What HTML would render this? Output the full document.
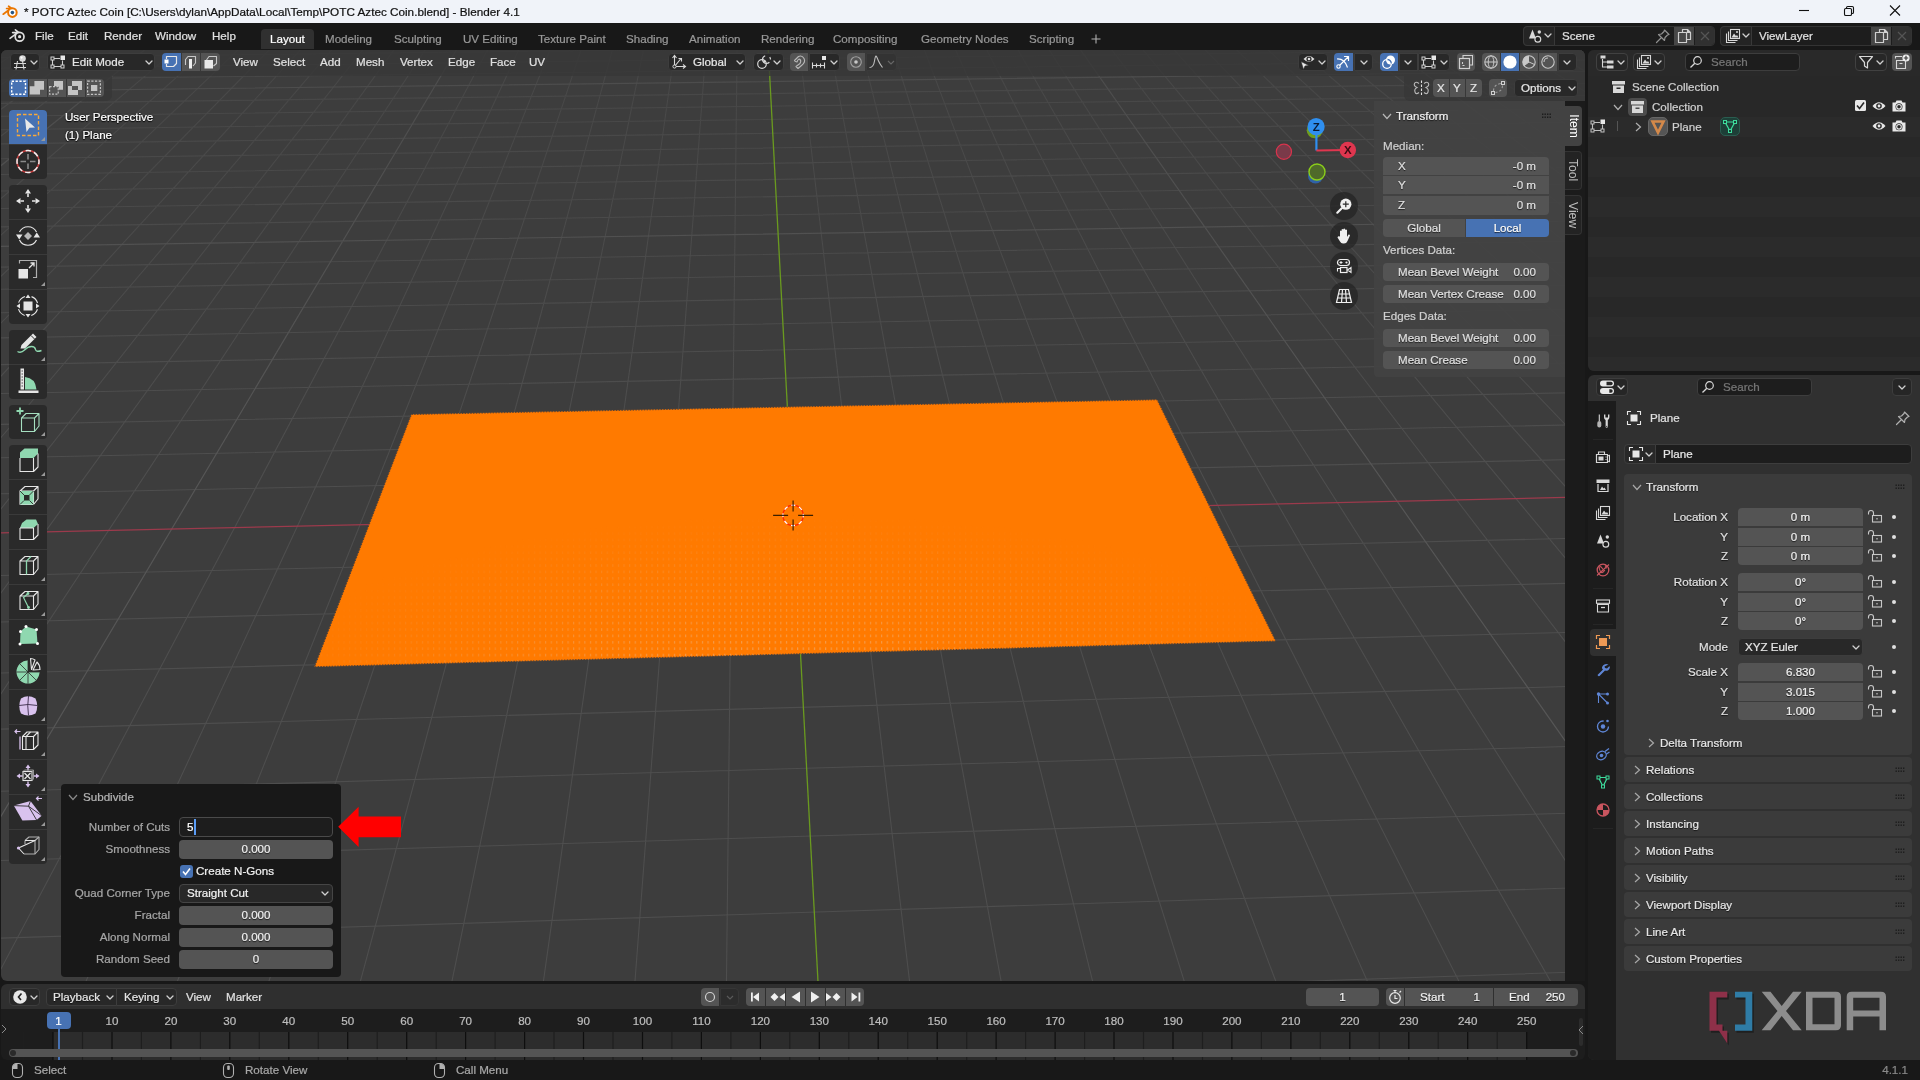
<!DOCTYPE html>
<html><head><meta charset="utf-8"><title>Blender</title>
<style>
*{box-sizing:border-box;margin:0;padding:0}
html,body{width:1920px;height:1080px;overflow:hidden;background:#181818}
body{position:relative;font-family:"Liberation Sans",sans-serif;font-size:12px;color:#e0e0e0;line-height:1}
.a{position:absolute}
.t{position:absolute;white-space:nowrap;line-height:14px;height:14px;font-size:11.6px;-webkit-text-stroke:.22px currentColor}
.ts{text-shadow:0 1px 1px rgba(0,0,0,.75)}
.dim{color:#989898}
.f{position:absolute;border-radius:4px}
.num{background:#545454}
.txt{background:#1d1d1d;border:1px solid #3d3d3d}
.btn{background:#545454}
.dd{background:#282828;border:1px solid #3d3d3d}
.blue{background:#4772b3}
svg{position:absolute;overflow:visible}
#vp{overflow:hidden;border-radius:6px}
.ic{stroke:#e0e0e0;fill:none;stroke-width:1.2;stroke-linecap:round;stroke-linejoin:round}
.chev{stroke:#d0d0d0;fill:none;stroke-width:1.3;stroke-linecap:round;stroke-linejoin:round}
#root{position:absolute;left:0;top:0;width:1920px;height:1080px;will-change:transform}
</style></head><body><div id="root">

<div class="a" id="titlebar" style="left:0;top:0;width:1920px;height:23px;background:#f0f3f9"></div>
<svg style="left:2px;top:4px" width="17" height="15" viewBox="0 0 17 15"><path d="M1.2 10.2 8.8 4.5H4.6M6.6 2.2l3.4 2.6" stroke="#ea7600" stroke-width="1.7" fill="none" stroke-linecap="round" stroke-linejoin="round"/><circle cx="10.4" cy="8.6" r="4.3" fill="#fff" stroke="#ea7600" stroke-width="2"/><circle cx="10.4" cy="8.6" r="1.8" fill="#265787"/></svg>
<div class="t" style="left:24px;top:5px;color:#111;font-size:11.72px" id="tt">* POTC Aztec Coin [C:\Users\dylan\AppData\Local\Temp\POTC Aztec Coin.blend] - Blender 4.1</div>
<svg style="left:1798px;top:5px" width="110" height="14" viewBox="0 0 110 14" fill="none" stroke="#111" stroke-width="1.1"><path d="M1 5.5H11"/><rect x="46.5" y="3.5" width="7" height="7" rx="1.3"/><path d="M48.5 3.5V2.8Q48.5 1.5 49.8 1.5H54.2Q55.5 1.5 55.5 2.8V7.2Q55.5 8.5 54.2 8.5H53.5"/><path d="M92 0.5 102 10.5M102 0.5 92 10.5"/></svg>

<div class="a" id="topbar" style="left:0;top:23px;width:1920px;height:27px;background:#181818"></div>
<!-- blender logo -->
<svg style="left:9px;top:28px" width="17" height="15" viewBox="0 0 17 15"><path d="M1 10.3 8.6 4.6H3.6M6.4 1.8l3.2 2.6" stroke="#e0e0e0" stroke-width="1.6" fill="none" stroke-linecap="round" stroke-linejoin="round"/><circle cx="10.6" cy="8.7" r="4.4" fill="#181818" stroke="#e0e0e0" stroke-width="1.7"/><circle cx="10.6" cy="8.7" r="1.6" fill="#e0e0e0"/></svg>
<div class="t" style="left:35px;top:29px">File</div>
<div class="t" style="left:68px;top:29px">Edit</div>
<div class="t" style="left:104px;top:29px">Render</div>
<div class="t" style="left:155px;top:29px">Window</div>
<div class="t" style="left:212px;top:29px">Help</div>
<div class="a" style="left:261px;top:29px;width:53px;height:20px;background:#303030;border-radius:4px 4px 0 0"></div>
<div class="t" style="left:270px;top:32px;color:#fff">Layout</div>
<div class="t dim" style="left:325px;top:32px">Modeling</div>
<div class="t dim" style="left:394px;top:32px">Sculpting</div>
<div class="t dim" style="left:463px;top:32px">UV Editing</div>
<div class="t dim" style="left:538px;top:32px">Texture Paint</div>
<div class="t dim" style="left:626px;top:32px">Shading</div>
<div class="t dim" style="left:689px;top:32px">Animation</div>
<div class="t dim" style="left:761px;top:32px">Rendering</div>
<div class="t dim" style="left:833px;top:32px">Compositing</div>
<div class="t dim" style="left:921px;top:32px">Geometry Nodes</div>
<div class="t dim" style="left:1029px;top:32px">Scripting</div>
<svg style="left:1091px;top:34px" width="10" height="10" viewBox="0 0 10 10"><path d="M5 0.5V9.5M0.5 5H9.5" stroke="#b0b0b0" stroke-width="1.1"/></svg>
<!-- scene selector -->
<div class="a" style="left:1523px;top:26px;width:192px;height:20px;background:#1d1d1d;border:1px solid #333;border-radius:4px"></div>
<div class="a" style="left:1523px;top:26px;width:32px;height:20px;background:#242424;border:1px solid #383838;border-radius:4px 0 0 4px"></div>
<div class="a" style="left:1674px;top:27px;width:20px;height:18px;background:#474747"></div>
<div class="a" style="left:1695px;top:27px;width:19px;height:18px;background:#303030;border-radius:0 3px 3px 0"></div>
<svg style="left:1527px;top:28px" width="16" height="16" viewBox="0 0 16 16"><path d="M5.5 1.5 9 10.5H2z" fill="#d8d8d8"/><circle cx="12.3" cy="4" r="1.7" fill="#d8d8d8"/><circle cx="10.8" cy="11.3" r="2.9" fill="#1d1d1d" stroke="#d8d8d8" stroke-width="1.2"/></svg>
<svg style="left:1544px;top:33px" width="8" height="6" viewBox="0 0 8 6"><path class="chev" d="M1 1 4 4 7 1"/></svg>
<div class="t" style="left:1562px;top:29px">Scene</div>
<svg style="left:1655px;top:28px" width="16" height="16" viewBox="0 0 16 16"><path d="M9.5 2 14 6.5 12.5 7 10 9.5 9.5 12.5 3.5 6.5 6.5 6 9 3.5ZM6 10 1.5 14.5" stroke="#909090" stroke-width="1.2" fill="none" stroke-linejoin="round" stroke-linecap="round"/></svg>
<svg style="left:1677px;top:28px" width="15" height="16" viewBox="0 0 15 16"><path d="M5.5 4V1.5H10.5L13.5 4.5V11.5H9.5M10.5 1.5V4.5H13.5" stroke="#d0d0d0" stroke-width="1.2" fill="none" stroke-linejoin="round"/><path d="M1.5 4.5H9.5V14.5H1.5Z" stroke="#d0d0d0" stroke-width="1.2" fill="none" stroke-linejoin="round"/></svg>
<svg style="left:1700px;top:31px" width="10" height="10" viewBox="0 0 10 10"><path d="M1 1 9 9M9 1 1 9" stroke="#555" stroke-width="1.2"/></svg>
<!-- viewlayer selector -->
<div class="a" style="left:1720px;top:26px;width:192px;height:20px;background:#1d1d1d;border:1px solid #333;border-radius:4px"></div>
<div class="a" style="left:1720px;top:26px;width:32px;height:20px;background:#242424;border:1px solid #383838;border-radius:4px 0 0 4px"></div>
<div class="a" style="left:1871px;top:27px;width:20px;height:18px;background:#474747"></div>
<div class="a" style="left:1892px;top:27px;width:19px;height:18px;background:#303030;border-radius:0 3px 3px 0"></div>
<svg style="left:1725px;top:28px" width="16" height="16" viewBox="0 0 16 16"><path d="M1.5 5.5V14.5H10.5M3.5 3.5V12.5H12.5" stroke="#d8d8d8" stroke-width="1.1" fill="none"/><rect x="5.5" y="1.5" width="9" height="9" fill="none" stroke="#d8d8d8" stroke-width="1.1"/><path d="M6.5 9.5 9 5.5 11 8 12 7 13.5 9.5Z" fill="#d8d8d8"/><circle cx="12" cy="4" r="1" fill="#d8d8d8"/></svg>
<svg style="left:1742px;top:33px" width="8" height="6" viewBox="0 0 8 6"><path class="chev" d="M1 1 4 4 7 1"/></svg>
<div class="t" style="left:1759px;top:29px">ViewLayer</div>
<svg style="left:1874px;top:28px" width="15" height="16" viewBox="0 0 15 16"><path d="M5.5 4V1.5H10.5L13.5 4.5V11.5H9.5M10.5 1.5V4.5H13.5" stroke="#d0d0d0" stroke-width="1.2" fill="none" stroke-linejoin="round"/><path d="M1.5 4.5H9.5V14.5H1.5Z" stroke="#d0d0d0" stroke-width="1.2" fill="none" stroke-linejoin="round"/></svg>
<svg style="left:1897px;top:31px" width="10" height="10" viewBox="0 0 10 10"><path d="M1 1 9 9M9 1 1 9" stroke="#555" stroke-width="1.2"/></svg>

<svg id="vp" width="1584" height="931" viewBox="1 50 1584 931" style="position:absolute;left:1px;top:50px" shape-rendering="auto">
<rect x="0" y="50" width="1585" height="931" fill="#3d3d3d"/>
<path d="M-3050.7 2097.2L336.3 -161.0M-2873.3 2087.5L354.0 -161.1M-2697.2 2077.9L371.7 -161.2M-2522.4 2068.4L389.3 -161.4M-2176.7 2049.5L424.6 -161.6M-2005.8 2040.1L442.2 -161.7M-1836.2 2030.8L459.8 -161.9M-1667.8 2021.6L477.4 -162.0M-1500.7 2012.5L495.0 -162.1M-1334.8 2003.4L512.6 -162.2M-1170.1 1994.4L530.1 -162.3M-1006.6 1985.5L547.6 -162.5M-844.3 1976.6L565.2 -162.6M-523.2 1959.1L600.1 -162.8M-364.4 1950.4L617.6 -162.9M-206.8 1941.8L635.1 -163.0M-50.2 1933.2L652.5 -163.2M105.2 1924.7L670.0 -163.3M259.6 1916.3L687.4 -163.4M412.8 1907.9L704.8 -163.5M565.0 1899.6L722.2 -163.6M716.1 1891.3L739.5 -163.8M1015.1 1874.9L774.3 -164.0M1163.1 1866.9L791.6 -164.1M1310.0 1858.8L808.9 -164.2M1456.0 1850.8L826.2 -164.4M1600.9 1842.9L843.5 -164.5M1744.8 1835.0L860.8 -164.6M1887.8 1827.2L878.0 -164.7M2029.8 1819.5L895.3 -164.8M2170.8 1811.8L912.5 -164.9M2450.0 1796.5L947.0 -165.2M2588.2 1788.9L964.2 -165.3M2725.5 1781.4L981.3 -165.4M2861.8 1774.0L998.5 -165.5M2997.3 1766.6L1015.7 -165.6M3131.8 1759.2L1032.8 -165.8M3265.5 1751.9L1049.9 -165.9M3398.3 1744.6L1067.0 -166.0M3530.2 1737.4L1084.1 -166.1M3791.5 1723.2L1118.3 -166.4M3920.8 1716.1L1135.3 -166.5M4049.4 1709.1L1152.4 -166.6M4177.1 1702.1L1169.4 -166.7M4303.9 1695.1L1186.4 -166.8M4430.0 1688.2L1203.4 -166.9M-8858.4 1445.9L7492.6 853.5M-8118.8 1301.2L7125.7 783.6M-7485.0 1177.3L6796.6 721.0M-6935.8 1069.9L6499.8 664.4M-6455.4 975.9L6230.7 613.2M-6031.5 893.0L5985.7 566.5M-5654.8 819.3L5761.6 523.9M-5317.7 753.4L5555.9 484.7M-5014.4 694.1L5366.4 448.6M-4490.6 591.6L5028.8 384.3M-4262.9 547.1L4877.9 355.6M-4054.2 506.3L4737.2 328.8M-3862.2 468.7L4605.8 303.8M-3684.9 434.0L4482.7 280.3M-3520.8 402.0L4367.3 258.3M-3368.5 372.2L4258.8 237.7M-3226.6 344.4L4156.5 218.2M-3094.2 318.5L4060.1 199.8M-2854.3 271.6L3882.7 166.1M-2745.2 250.3L3800.9 150.5M-2642.6 230.2L3723.3 135.7M-2545.8 211.3L3649.5 121.6M-2454.4 193.4L3579.2 108.3M-2368.0 176.5L3512.3 95.5M-2286.1 160.5L3448.5 83.4M-2208.4 145.3L3387.6 71.8M-2134.6 130.8L3329.3 60.7M-1997.5 104.0L3220.2 39.9M-1933.7 91.5L3169.0 30.1M-1872.9 79.6L3119.8 20.8M-1814.7 68.3L3072.7 11.8M-1759.1 57.4L3027.3 3.2M-1705.9 47.0L2983.7 -5.1" stroke="#4e4e4e" stroke-width="1.1" fill="none"/>
<path d="M-2348.9 2058.9L407.0 -161.5M-683.2 1967.8L582.7 -162.7M2310.9 1804.1L929.8 -165.1M3661.3 1730.3L1101.2 -166.2M-9732.7 1616.9L7904.3 931.9M-2970.4 294.3L3968.9 182.5M-2064.4 117.1L3273.6 50.1" stroke="#565656" stroke-width="1.2" fill="none"/>
<defs><linearGradient id="fd" x1="0" y1="0" x2="0" y2="1"><stop offset="0" stop-color="#3d3d3d" stop-opacity="0.4"/><stop offset="0.3" stop-color="#3d3d3d" stop-opacity="0.12"/><stop offset="0.45" stop-color="#3d3d3d" stop-opacity="0"/></linearGradient></defs>
<rect x="0" y="50" width="1585" height="931" fill="url(#fd)"/>
<path d="M866.1 1883.1L756.9 -163.9" stroke="#6a9a1f" stroke-width="1.3" fill="none"/>
<path d="M-4740.0 640.4L5191.2 415.2" stroke="#9c3a4c" stroke-width="1.3" fill="none"/>
<polygon points="411.5,414.5 1157.0,399.8 1275.5,641.0 314.7,666.7" fill="#ff7a00" stroke="#ff7a00" stroke-width="0.4" stroke-linejoin="miter"/>
<polygon points="411.5,414.5 1157.0,399.8 1275.5,641.0 314.7,666.7" fill="none" stroke="#1d2f4a" stroke-width="0.9" stroke-dasharray="1.4 1.4" opacity="0.75"/>
<defs><pattern id="pd" width="5.6" height="6.4" patternUnits="userSpaceOnUse"><rect x="2" y="1" width="1" height="2.6" fill="#f0ab6c"/></pattern><radialGradient id="pg" gradientUnits="userSpaceOnUse" cx="800" cy="670" r="520" gradientTransform="translate(800 670) scale(1 0.3) translate(-800 -670)"><stop offset="0" stop-color="#fff" stop-opacity="0.95"/><stop offset="0.45" stop-color="#fff" stop-opacity="0.6"/><stop offset="1" stop-color="#fff" stop-opacity="0"/></radialGradient><mask id="pm" maskUnits="userSpaceOnUse" x="280" y="380" width="1040" height="320"><rect x="280" y="380" width="1040" height="320" fill="url(#pg)"/></mask><clipPath id="pc"><polygon points="411.5,414.5 1157.0,399.8 1275.5,641.0 314.7,666.7"/></clipPath></defs>
<g clip-path="url(#pc)"><rect x="280" y="380" width="1040" height="320" fill="url(#pd)" mask="url(#pm)"/></g>
<g fill="none"><circle cx="793.1" cy="515.4" r="10.2" stroke="#ff2a00" stroke-width="1.25"/><circle cx="793.1" cy="515.4" r="10.2" stroke="#fff" stroke-width="1.25" stroke-dasharray="4 4" stroke-dashoffset="2"/><path d="M773.1 515.4H788.1M798.1 515.4H813.1M793.1 500.4V511.4M793.1 519.4V530.4" stroke="#1a1000" stroke-width="1.2" opacity="0.85"/></g>
</svg>
<!-- viewport header -->
<div class="a" style="left:1px;top:50px;width:1584px;height:26px;background:rgba(55,55,55,.8);border-radius:6px 6px 0 0"></div>
<div class="a" style="left:1px;top:76px;width:111px;height:25px;background:rgba(55,55,55,.8);border-radius:0 0 6px 0"></div>
<div class="a" style="left:1404px;top:76px;width:181px;height:25px;background:rgba(55,55,55,.8);border-radius:0 0 0 6px"></div>
<!-- editor type -->
<div class="f dd" style="left:10px;top:53px;width:30px;height:18px"></div>
<svg style="left:13px;top:54px" width="16" height="16" viewBox="0 0 16 16"><path d="M1 9.5H13M1 13.5H13M4.5 7 3 15.5M9.5 7 11 15.5" stroke="#d8d8d8" stroke-width="1.1" fill="none"/><circle cx="9.5" cy="4.5" r="3.3" fill="#d8d8d8"/><circle cx="8.6" cy="3.6" r="1.1" fill="#fff"/></svg>
<svg style="left:30px;top:60px" width="8" height="6" viewBox="0 0 8 6"><path class="chev" d="M1 1 4 4 7 1"/></svg>
<!-- edit mode -->
<div class="f dd" style="left:47px;top:53px;width:108px;height:18px"></div>
<svg style="left:50px;top:54px" width="16" height="16" viewBox="0 0 16 16"><path d="M3 4.5H10M3 12.5H11M2.5 5V11.5M12.5 6.5V11.5" stroke="#d0d0d0" stroke-width="1.1" fill="none"/><rect x="1" y="3" width="3" height="3" fill="#282828" stroke="#d0d0d0"/><rect x="1" y="11" width="3" height="3" fill="#282828" stroke="#d0d0d0"/><rect x="11" y="11" width="3" height="3" fill="#282828" stroke="#d0d0d0"/><rect x="10.5" y="1.5" width="4.5" height="4.5" fill="#e8e8e8"/></svg>
<div class="t" style="left:72px;top:55px;color:#e6e6e6">Edit Mode</div>
<svg style="left:145px;top:60px" width="8" height="6" viewBox="0 0 8 6"><path class="chev" d="M1 1 4 4 7 1"/></svg>
<!-- select modes -->
<div class="a blue" style="left:162px;top:53px;width:19px;height:18px;border-radius:4px 0 0 4px"></div>
<div class="a btn" style="left:182px;top:53px;width:18px;height:18px"></div>
<div class="a btn" style="left:201px;top:53px;width:19px;height:18px;border-radius:0 4px 4px 0"></div>
<svg style="left:163px;top:54px" width="17" height="16" viewBox="0 0 17 16"><path d="M3.5 5V2.5H13.5V9.5L10.5 12.5H3.5V10" stroke="#e8e8e8" stroke-width="1.2" fill="none" stroke-linejoin="round"/><rect x="1.5" y="5.5" width="4" height="4" fill="#fff"/></svg>
<svg style="left:182px;top:54px" width="17" height="16" viewBox="0 0 17 16"><path d="M3.5 11V5.5L6 2.5H13.5V9L11 12" stroke="#c8c8c8" stroke-width="1.1" fill="none" stroke-linejoin="round"/><rect x="7" y="5" width="3" height="9.5" fill="#f0f0f0"/></svg>
<svg style="left:202px;top:54px" width="17" height="16" viewBox="0 0 17 16"><path d="M4.5 6 7 2.5H14.5V9.5L11.5 12" stroke="#c8c8c8" stroke-width="1.1" fill="none" stroke-linejoin="round"/><rect x="2.5" y="6" width="8.5" height="8.5" fill="#e8e8e8"/></svg>
<!-- menus -->
<div class="t" style="left:233px;top:55px">View</div>
<div class="t" style="left:273px;top:55px">Select</div>
<div class="t" style="left:320px;top:55px">Add</div>
<div class="t" style="left:356px;top:55px">Mesh</div>
<div class="t" style="left:400px;top:55px">Vertex</div>
<div class="t" style="left:448px;top:55px">Edge</div>
<div class="t" style="left:490px;top:55px">Face</div>
<div class="t" style="left:529px;top:55px">UV</div>
<!-- row2 select tool modes -->
<div class="a blue" style="left:9px;top:79px;width:19px;height:18px;border-radius:4px 0 0 4px"></div>
<div class="a btn" style="left:29px;top:79px;width:18px;height:18px"></div>
<div class="a btn" style="left:48px;top:79px;width:18px;height:18px"></div>
<div class="a btn" style="left:67px;top:79px;width:18px;height:18px"></div>
<div class="a btn" style="left:86px;top:79px;width:18px;height:18px;border-radius:0 4px 4px 0"></div>
<svg style="left:9px;top:79px" width="95" height="18" viewBox="9 79 95 18"><rect x="11.7" y="81.3" width="13.8" height="13" fill="none" stroke="#fff" stroke-width="1.4" stroke-dasharray="2.3 1.55"/><path d="M34.400 81H44V89.750H40V94.600H29.750V86.250H34.400Z" fill="#c4c4c4"/><path d="M54 81H63V89.750H58.750V86.250H54Z" fill="#c4c4c4"/><rect x="49.600" y="86.600" width="8.600" height="7.600" fill="none" stroke="#c4c4c4" stroke-width="1.200" stroke-dasharray="2 1.400"/><path d="M72 81H82V90H78V95H68V86H72Z" fill="#c4c4c4"/><rect x="72" y="86" width="6" height="4" fill="#545454"/><rect x="87.600" y="81.200" width="12.800" height="13.200" fill="none" stroke="#c4c4c4" stroke-width="1.200" stroke-dasharray="2.200 1.500"/><rect x="91" y="85" width="6.300" height="6" fill="#c4c4c4"/></svg>
<!-- center controls -->
<div class="f dd" style="left:668px;top:53px;width:78px;height:18px"></div>
<svg style="left:671px;top:54px" width="16" height="16" viewBox="0 0 16 16"><path d="M3.500 12.500V2M3.500 12.500H14M3.500 12.500 10 4.500" stroke="#d8d8d8" stroke-width="1.1" fill="none"/><path d="M1.500 4 3.500 1.500 5.500 4M12 10.500 14.500 12.500 12 14.500M7.500 4.500H10.500V7.500" stroke="#d8d8d8" stroke-width="1.1" fill="none"/><circle cx="3.500" cy="12.500" r="1.600" fill="#282828" stroke="#d8d8d8"/></svg>
<div class="t" style="left:693px;top:55px;color:#e6e6e6">Global</div>
<svg style="left:736px;top:60px" width="8" height="6" viewBox="0 0 8 6"><path class="chev" d="M1 1 4 4 7 1"/></svg>
<div class="f dd" style="left:753px;top:53px;width:31px;height:18px"></div>
<svg style="left:756px;top:54px" width="16" height="16" viewBox="0 0 16 16"><circle cx="6" cy="10" r="4.300" fill="none" stroke="#d8d8d8" stroke-width="1.200"/><circle cx="10.500" cy="5.500" r="4" fill="none" stroke="#d8d8d8" stroke-width="1.200" stroke-dasharray="14 5" stroke-dashoffset="-3"/><circle cx="8.500" cy="7.500" r="1.300" fill="#d8d8d8"/></svg>
<svg style="left:773px;top:60px" width="8" height="6" viewBox="0 0 8 6"><path class="chev" d="M1 1 4 4 7 1"/></svg>
<div class="a btn" style="left:790px;top:53px;width:18px;height:18px;border-radius:4px 0 0 4px"></div>
<div class="a dd" style="left:809px;top:53px;width:31px;height:18px;border-radius:0 4px 4px 0"></div>
<svg style="left:791px;top:54px" width="16" height="16" viewBox="0 0 16 16"><path d="M3.500 6.500 7.500 2.500Q11 1 13 4.500T10.500 11.500L7 14.500 5 12.500 9 9.500Q10.500 7 9 5.500T6 8L4.500 7.500Z" fill="none" stroke="#b8b8b8" stroke-width="1.100" stroke-linejoin="round"/></svg>
<svg style="left:811px;top:54px" width="16" height="16" viewBox="0 0 16 16"><path d="M1.500 8.500V14.500M5.500 9.500V13.500M9.500 9.500V13.500M13.500 8.500V14.500M1.500 11.500H13.500" stroke="#d8d8d8" stroke-width="1.100"/><rect x="11" y="2" width="4" height="4" fill="#e8e8e8"/></svg>
<svg style="left:830px;top:60px" width="8" height="6" viewBox="0 0 8 6"><path class="chev" d="M1 1 4 4 7 1"/></svg>
<div class="a btn" style="left:847px;top:53px;width:18px;height:18px;border-radius:4px 0 0 4px"></div>
<div class="a" style="left:866px;top:53px;width:31px;height:18px;border-radius:0 4px 4px 0;background:#333;border:1px solid #3a3a3a"></div>
<svg style="left:848px;top:54px" width="16" height="16" viewBox="0 0 16 16"><circle cx="8" cy="8" r="5.300" fill="none" stroke="#a0a0a0" stroke-width="1.100"/><circle cx="8" cy="8" r="1.800" fill="#c8c8c8"/></svg>
<svg style="left:868px;top:54px" width="16" height="16" viewBox="0 0 16 16"><path d="M1.500 13.500Q5.500 13.500 6.500 7T8.500 2.500 10.500 7 14.500 13.500" fill="none" stroke="#c0c0c0" stroke-width="1.100"/></svg>
<svg style="left:887px;top:60px" width="8" height="6" viewBox="0 0 8 6"><path d="M1 1 4 4 7 1" stroke="#666" fill="none" stroke-width="1.200"/></svg>
<!-- right header controls -->
<div class="f dd" style="left:1298px;top:53px;width:30px;height:18px"></div>
<svg style="left:1300px;top:54px" width="16" height="16" viewBox="0 0 16 16"><path d="M3.500 5Q9 -1 14.500 5Q9 11 3.500 5Z" fill="#e0e0e0"/><circle cx="9" cy="5" r="2.600" fill="#282828"/><circle cx="9" cy="5" r="1.300" fill="#e0e0e0"/><path d="M1 7.500 9 11.500 5 12 3.500 15.500Z" fill="#e8e8e8" stroke="#282828" stroke-width="0.600"/></svg>
<svg style="left:1318px;top:60px" width="8" height="6" viewBox="0 0 8 6"><path class="chev" d="M1 1 4 4 7 1"/></svg>
<div class="a blue" style="left:1334px;top:53px;width:19px;height:18px;border-radius:4px 0 0 4px"></div>
<div class="a dd" style="left:1354px;top:53px;width:19px;height:18px;border-radius:0 4px 4px 0"></div>
<svg style="left:1335px;top:54px" width="16" height="16" viewBox="0 0 16 16"><path d="M3.500 12.500 13 3M13.500 2.500H9.500M13.500 2.500V6.500" stroke="#fff" stroke-width="1.200" fill="none" stroke-linecap="round"/><path d="M2 5Q9.500 4.500 12.500 13.500" stroke="#fff" stroke-width="1.200" fill="none"/><circle cx="3.500" cy="12.500" r="1.700" fill="#4772b3" stroke="#fff" stroke-width="1.100"/></svg>
<svg style="left:1360px;top:60px" width="8" height="6" viewBox="0 0 8 6"><path class="chev" d="M1 1 4 4 7 1"/></svg>
<div class="a blue" style="left:1380px;top:53px;width:18px;height:18px;border-radius:4px 0 0 4px"></div>
<div class="a dd" style="left:1399px;top:53px;width:19px;height:18px;border-radius:0"></div>
<div class="a dd" style="left:1418px;top:53px;width:32px;height:18px;border-radius:0 4px 4px 0"></div>
<svg style="left:1381px;top:54px" width="16" height="16" viewBox="0 0 16 16"><circle cx="9.500" cy="6" r="4.500" fill="#fff"/><circle cx="6" cy="10" r="4.300" fill="none" stroke="#fff" stroke-width="1.300"/><path d="M6.500 5.500A4.300 4.300 0 0 1 10.300 9.500" stroke="#4772b3" stroke-width="1.300" fill="none"/></svg>
<svg style="left:1404px;top:60px" width="8" height="6" viewBox="0 0 8 6"><path class="chev" d="M1 1 4 4 7 1"/></svg>
<svg style="left:1421px;top:54px" width="16" height="16" viewBox="0 0 16 16"><path d="M3 4.500H10M3 12.500H11M2.500 5V11.500M12.500 6.500V11.500" stroke="#d0d0d0" stroke-width="1.100" fill="none"/><rect x="1" y="3" width="3" height="3" fill="#282828" stroke="#d0d0d0"/><rect x="1" y="11" width="3" height="3" fill="#282828" stroke="#d0d0d0"/><rect x="11" y="11" width="3" height="3" fill="#282828" stroke="#d0d0d0"/><rect x="10.500" y="1.500" width="4.500" height="4.500" fill="#e8e8e8"/></svg>
<svg style="left:1440px;top:60px" width="8" height="6" viewBox="0 0 8 6"><path class="chev" d="M1 1 4 4 7 1"/></svg>
<div class="f btn" style="left:1457px;top:53px;width:18px;height:18px"></div>
<svg style="left:1458px;top:54px" width="16" height="16" viewBox="0 0 16 16"><path d="M5 4V1.500H14.500V11H12" stroke="#d0d0d0" stroke-width="1.100" fill="none"/><rect x="1.500" y="4.500" width="10" height="10" fill="none" stroke="#d0d0d0" stroke-width="1.200"/><path d="M4.500 8V11.500H8" stroke="#d0d0d0" stroke-width="1.100" fill="none" stroke-dasharray="2 1.500"/></svg>
<div class="a btn" style="left:1482px;top:53px;width:18px;height:18px;border-radius:4px 0 0 4px"></div>
<div class="a blue" style="left:1501px;top:53px;width:18px;height:18px"></div>
<div class="a btn" style="left:1520px;top:53px;width:18px;height:18px"></div>
<div class="a btn" style="left:1539px;top:53px;width:18px;height:18px"></div>
<div class="a dd" style="left:1558px;top:53px;width:19px;height:18px;border-radius:0 4px 4px 0"></div>
<svg style="left:1483px;top:54px" width="16" height="16" viewBox="0 0 16 16"><circle cx="8" cy="8" r="6.200" fill="none" stroke="#c8c8c8" stroke-width="1.100"/><ellipse cx="8" cy="8" rx="2.800" ry="6.200" fill="none" stroke="#c8c8c8" stroke-width="1"/><path d="M2 8H14" stroke="#c8c8c8" stroke-width="1"/></svg>
<svg style="left:1502px;top:54px" width="16" height="16" viewBox="0 0 16 16"><circle cx="8" cy="8" r="6.600" fill="#fff"/></svg>
<svg style="left:1521px;top:54px" width="16" height="16" viewBox="0 0 16 16"><circle cx="8" cy="8" r="6.200" fill="none" stroke="#c8c8c8" stroke-width="1.100"/><path d="M8 1.800A6.200 6.200 0 0 0 3 11.700L8 8Z" fill="#c8c8c8"/><path d="M3 11.700 8 8 13.500 10.500" stroke="#c8c8c8" stroke-width="1" fill="none"/></svg>
<svg style="left:1540px;top:54px" width="16" height="16" viewBox="0 0 16 16"><circle cx="8" cy="8" r="6.200" fill="none" stroke="#c8c8c8" stroke-width="1.100"/><path d="M4 8A4 4 0 0 1 8 4" stroke="#c8c8c8" stroke-width="1.100" fill="none"/></svg>
<svg style="left:1563px;top:60px" width="8" height="6" viewBox="0 0 8 6"><path class="chev" d="M1 1 4 4 7 1"/></svg>
<!-- row2 right -->
<svg style="left:1413px;top:80px" width="17" height="16" viewBox="0 0 17 16"><path d="M8.500 0.500V15.500" stroke="#e0e0e0" stroke-width="1.100" stroke-dasharray="2.500 1.500"/><path d="M6 3.500Q2.500 1 1.500 3.500T4 7.500Q1 9 2 12T6 12.500M11 3.500Q14.500 1 15.500 3.500T13 7.500Q16 9 15 12T11 12.500" stroke="#b8b8b8" stroke-width="1.100" fill="none"/></svg>
<div class="a btn" style="left:1433px;top:79px;width:16px;height:18px;border-radius:4px 0 0 4px"></div>
<div class="a btn" style="left:1450px;top:79px;width:15px;height:18px"></div>
<div class="a btn" style="left:1466px;top:79px;width:16px;height:18px;border-radius:0 4px 4px 0"></div>
<div class="t" style="left:1437px;top:81px;color:#e6e6e6">X</div>
<div class="t" style="left:1453px;top:81px;color:#e6e6e6">Y</div>
<div class="t" style="left:1470px;top:81px;color:#e6e6e6">Z</div>
<div class="f btn" style="left:1489px;top:79px;width:18px;height:18px"></div>
<svg style="left:1490px;top:80px" width="16" height="16" viewBox="0 0 16 16"><path d="M3.500 11Q3.500 4.500 11 3.500M12.500 5.500Q12.500 11.500 5.500 12.500" stroke="#9a9a9a" stroke-width="1.100" fill="none" stroke-dasharray="2.500 2"/><rect x="11.500" y="1.500" width="3" height="3" fill="none" stroke="#d0d0d0"/><rect x="1.500" y="11.500" width="3" height="3" fill="none" stroke="#d0d0d0"/></svg>
<div class="f dd" style="left:1514px;top:79px;width:64px;height:18px"></div>
<div class="t" style="left:1521px;top:81px;color:#e6e6e6">Options</div>
<svg style="left:1568px;top:86px" width="8" height="6" viewBox="0 0 8 6"><path class="chev" d="M1 1 4 4 7 1"/></svg>

<!-- toolbar -->
<div class="a" style="left:9px;top:110px;width:38px;height:69px;background:#2a2a2a;border-radius:4px"></div>
<div class="a blue" style="left:9px;top:110px;width:38px;height:34px;border-radius:4px 4px 0 0"></div>
<svg style="left:9px;top:109px" width="38" height="34" viewBox="0 0 38 34"><rect x="8.500" y="5.500" width="21" height="21" fill="none" stroke="#f7a93b" stroke-width="1.400" stroke-dasharray="3.500 2"/><path d="M16 9.500 26 18.500 20.500 18.800 17.500 23Z" fill="#e8e8e8"/><path d="M36 28V32H32Z" fill="#9a9a9a"/></svg>
<div class="a" style="left:9px;top:144px;width:38px;height:1px;background:#3a3a3a"></div>
<svg style="left:9px;top:144px" width="38" height="34" viewBox="0 0 38 34"><circle cx="19" cy="17.500" r="11" fill="none" stroke="#c23b3b" stroke-width="1.500"/><circle cx="19" cy="17.500" r="11" fill="none" stroke="#f0f0f0" stroke-width="1.500" stroke-dasharray="5.500 3.140" stroke-dashoffset="2.700"/><path d="M19 10V15.500M19 19.500V25M11.500 17.500H17M21 17.500H26.500" stroke="#8a8a8a" stroke-width="1.600"/></svg>
<div class="a" style="left:9px;top:185px;width:38px;height:139px;background:#2a2a2a;border-radius:4px"></div>
<svg style="left:9px;top:184px" width="38" height="34" viewBox="0 0 38 34"><path d="M19 5 22 9.500H16ZM19 29 22 24.500H16ZM7 17 11.500 14V20ZM31 17 26.500 14V20Z" fill="#e6e6e6"/><path d="M19 9.500V13M19 21V24.500M11.500 17H15M23 17H26.500" stroke="#e6e6e6" stroke-width="1.600"/></svg>
<div class="a" style="left:9px;top:219px;width:38px;height:1px;background:#3a3a3a"></div>
<svg style="left:9px;top:219px" width="38" height="34" viewBox="0 0 38 34"><path d="M10.500 13A9.500 9.500 0 0 1 27.500 13M27.500 21A9.500 9.500 0 0 1 10.500 21" stroke="#e6e6e6" stroke-width="1.200" fill="none"/><path d="M19 13 23 17 19 21 15 17Z" fill="#b8b8b8"/><path d="M7 15.500H13.500L10.200 20.500ZM24.500 18.500H31L27.800 13.500Z" fill="#e6e6e6"/></svg>
<div class="a" style="left:9px;top:254px;width:38px;height:1px;background:#3a3a3a"></div>
<svg style="left:9px;top:254px" width="38" height="34" viewBox="0 0 38 34"><path d="M10.500 9.500V6.500H27.500V23.500H24" stroke="#b0b0b0" stroke-width="1.200" fill="none"/><rect x="9.500" y="15" width="9.500" height="9.500" fill="#e6e6e6"/><path d="M20 14 25 9M21.500 9H25V12.500" stroke="#e6e6e6" stroke-width="1.300" fill="none"/><path d="M36 28V32H32Z" fill="#9a9a9a"/></svg>
<div class="a" style="left:9px;top:289px;width:38px;height:1px;background:#3a3a3a"></div>
<svg style="left:9px;top:289px" width="38" height="34" viewBox="0 0 38 34"><circle cx="19" cy="17" r="10" fill="none" stroke="#e6e6e6" stroke-width="1.100" stroke-dasharray="9 6.700" stroke-dashoffset="-3.300"/><rect x="14.500" y="12.500" width="9" height="9" fill="#e6e6e6"/><path d="M19 5.500 21.500 9H16.500ZM19 28.500 21.500 25H16.500ZM7.500 17 11 14.500V19.500ZM30.500 17 27 14.500V19.500Z" fill="#e6e6e6"/></svg>
<div class="a" style="left:9px;top:330px;width:38px;height:69px;background:#2a2a2a;border-radius:4px"></div>
<svg style="left:9px;top:329px" width="38" height="34" viewBox="0 0 38 34"><path d="M11.500 19.500 12.500 16 24 4.500 27.500 8 16 19.500Z" fill="#e6e6e6"/><path d="M22 6.500 25.500 10" stroke="#2b2b2b" stroke-width="1"/><path d="M8.500 22.500Q12 24.500 15.500 21T22.500 17.500 26.500 20.500 32.500 21.500" stroke="#8fd8b0" stroke-width="1.400" fill="none"/><path d="M36 28V32H32Z" fill="#9a9a9a"/></svg>
<div class="a" style="left:9px;top:364px;width:38px;height:1px;background:#3a3a3a"></div>
<svg style="left:9px;top:364px" width="38" height="34" viewBox="0 0 38 34"><path d="M11.500 4.500H15V25.500H11.500Z" fill="#e6e6e6"/><path d="M9.500 26.500H29.500V29H9.500Z" fill="#e6e6e6"/><path d="M16 13Q26.500 14 27.500 25.500H16Z" fill="#8fd8b0"/><path d="M12.500 7H14M12.500 10H14M12.500 13H14M12.500 16H14M12.500 19H14M12.500 22H14" stroke="#2b2b2b" stroke-width="0.800"/></svg>
<div class="a" style="left:9px;top:405px;width:38px;height:34px;background:#2a2a2a;border-radius:4px"></div>
<svg style="left:9px;top:404px" width="38" height="34" viewBox="0 0 38 34"><path d="M7.500 7H14.500M11 3.500V10.500" stroke="#8fd8b0" stroke-width="1.800"/><path d="M12.500 14 17 9.500H30V22L25.500 27.500H12.500ZM12.500 14H25.500L30 9.500M25.500 14V27.500" stroke="#a5dfc0" stroke-width="1.100" fill="none" stroke-linejoin="round"/><path d="M36 28V32H32Z" fill="#9a9a9a"/></svg>
<div class="a" style="left:9px;top:445px;width:38px;height:419px;background:#2a2a2a;border-radius:4px"></div>
<svg style="left:9px;top:444px" width="38" height="34" viewBox="0 0 38 34"><path d="M11 8.500 15.500 4.500H29V9.500L24.500 14H11Z" fill="#8fd8b0"/><path d="M11 14V27.500H24.500L29 23V9.500M24.500 14V27.500" stroke="#e6e6e6" stroke-width="1.100" fill="none" stroke-linejoin="round"/><path d="M36 28V32H32Z" fill="#9a9a9a"/></svg>
<div class="a" style="left:9px;top:479px;width:38px;height:1px;background:#3a3a3a"></div>
<svg style="left:9px;top:479px" width="38" height="34" viewBox="0 0 38 34"><path d="M11 12 16 7.500H29V20L24.500 25.500H11ZM11 12H24.500L29 7.500M24.500 12V25.500" stroke="#e6e6e6" stroke-width="1.100" fill="none" stroke-linejoin="round"/><path d="M11 12H24.500V25.500H11Z" fill="#8fd8b0"/><rect x="15" y="16" width="5.500" height="5.500" fill="#2b2b2b"/><path d="M11 12 15 16M24.500 12 20.500 16M11 25.500 15 21.500M24.500 25.500 20.500 21.500" stroke="#2b2b2b" stroke-width="0.900"/></svg>
<div class="a" style="left:9px;top:514px;width:38px;height:1px;background:#3a3a3a"></div>
<svg style="left:9px;top:514px" width="38" height="34" viewBox="0 0 38 34"><path d="M11 14 13 9 17.500 5.500H27L29 10 24.500 14Z" fill="#8fd8b0"/><path d="M11 14V25.500H24.500L29 21V10M24.500 14V25.500M11 14H24.500" stroke="#e6e6e6" stroke-width="1.100" fill="none" stroke-linejoin="round"/></svg>
<div class="a" style="left:9px;top:549px;width:38px;height:1px;background:#3a3a3a"></div>
<svg style="left:9px;top:549px" width="38" height="34" viewBox="0 0 38 34"><path d="M11 12 16 7.500H29V20L24.500 25.500H11ZM11 12H24.500L29 7.500M24.500 12V25.500" stroke="#e6e6e6" stroke-width="1.100" fill="none" stroke-linejoin="round"/><path d="M17.500 25.500V12L22 7.500" stroke="#8fd8b0" stroke-width="1.300" fill="none"/><path d="M36 28V32H32Z" fill="#9a9a9a"/></svg>
<div class="a" style="left:9px;top:584px;width:38px;height:1px;background:#3a3a3a"></div>
<svg style="left:9px;top:584px" width="38" height="34" viewBox="0 0 38 34"><path d="M11 12 16 7.500H29V20L24.500 25.500H11ZM11 12H24.500L29 7.500M24.500 12V25.500" stroke="#e6e6e6" stroke-width="1.100" fill="none" stroke-linejoin="round"/><path d="M19 9.500 14.500 13.500 19.500 23.500" stroke="#8fd8b0" stroke-width="1.200" fill="none"/><circle cx="19" cy="9.500" r="1.400" fill="#8fd8b0"/><circle cx="19.500" cy="23.500" r="1.400" fill="#8fd8b0"/><path d="M36 28V32H32Z" fill="#9a9a9a"/></svg>
<div class="a" style="left:9px;top:619px;width:38px;height:1px;background:#3a3a3a"></div>
<svg style="left:9px;top:619px" width="38" height="34" viewBox="0 0 38 34"><path d="M11.500 12.500 17 7.500 27.500 10.500 28.500 24.500 11 25Z" fill="#8fd8b0"/><g fill="#fff"><circle cx="11.500" cy="12.500" r="1.500"/><circle cx="17" cy="7.500" r="1.500"/><circle cx="27.500" cy="10.500" r="1.500"/><circle cx="28.500" cy="24.500" r="1.500"/><circle cx="11" cy="25" r="1.500"/></g></svg>
<div class="a" style="left:9px;top:654px;width:38px;height:1px;background:#3a3a3a"></div>
<svg style="left:9px;top:654px" width="38" height="34" viewBox="0 0 38 34"><path d="M19 18V6.500A11.500 11.500 0 1 0 30.500 18Z" fill="#8fd8b0"/><path d="M19 18V6.500M19 18 10.900 9.900M19 18H7.500M19 18 10.900 26.100M19 18V29.500M19 18 27.100 26.100M19 18H30.500" stroke="#2b2b2b" stroke-width="0.800"/><path d="M21.500 4.500Q24 4.500 26 6L22.500 15.500ZM28 8Q31 11 31 15.500L24 16Z" fill="none" stroke="#e6e6e6" stroke-width="1.100" stroke-linejoin="round"/></svg>
<div class="a" style="left:9px;top:689px;width:38px;height:1px;background:#3a3a3a"></div>
<svg style="left:9px;top:689px" width="38" height="34" viewBox="0 0 38 34"><path d="M12 9.500Q19 5 26.500 9.500Q30 17 26.500 24.500Q19 28.500 12 24.500Q8.500 17 12 9.500Z" fill="#d9c2ee"/><path d="M10 16.500Q19 14.500 28.500 16.500M19.500 7Q18 17 19.500 26.500" stroke="#3a2b4a" stroke-width="0.900" fill="none"/><path d="M36 28V32H32Z" fill="#9a9a9a"/></svg>
<div class="a" style="left:9px;top:724px;width:38px;height:1px;background:#3a3a3a"></div>
<svg style="left:9px;top:724px" width="38" height="34" viewBox="0 0 38 34"><path d="M13.500 12.500 18 8H29V21L24.500 25.500H13.500ZM13.500 12.500H24.500L29 8M24.500 12.500V25.500" stroke="#e6e6e6" stroke-width="1.100" fill="none" stroke-linejoin="round"/><path d="M17 25.500V12.500L21.500 8" stroke="#e6e6e6" stroke-width="1.100" fill="none"/><path d="M11 25.500V12.500" stroke="#d9c2ee" stroke-width="1.300"/><path d="M6 7.500H11.500M8 5.500 6 7.500 8 9.500" stroke="#d9c2ee" stroke-width="1.200" fill="none"/><path d="M36 28V32H32Z" fill="#9a9a9a"/></svg>
<div class="a" style="left:9px;top:759px;width:38px;height:1px;background:#3a3a3a"></div>
<svg style="left:9px;top:759px" width="38" height="34" viewBox="0 0 38 34"><path d="M19 5.500 21.500 9H16.500ZM19 28.500 21.500 25H16.500ZM7.500 17 11 14.500V19.500ZM30.500 17 27 14.500V19.500Z" fill="#d9c2ee"/><path d="M19 9V11.500M19 22.500V25M11 17H13.500M24.500 17H27" stroke="#d9c2ee" stroke-width="1.400"/><rect x="14" y="12.500" width="9" height="9" fill="none" stroke="#e6e6e6" stroke-width="1.100"/><path d="M14 12.500 15.500 11H24.500V20L23 21.500M23 12.500 24.500 11" stroke="#a0a0a0" stroke-width="0.900" fill="none"/><path d="M15.500 14 21.500 20M21.500 14 15.500 20" stroke="#e6e6e6" stroke-width="1.300"/><path d="M36 28V32H32Z" fill="#9a9a9a"/></svg>
<div class="a" style="left:9px;top:794px;width:38px;height:1px;background:#3a3a3a"></div>
<svg style="left:9px;top:794px" width="38" height="34" viewBox="0 0 38 34"><path d="M4.800 11.600 21.500 6.900 32.700 21.700 27.600 26 13.400 26.400Z" fill="#d9c2ee"/><path d="M4.800 11.600 19.500 12.200 27.600 26M19.500 12.200 21.500 6.900M19.500 12.200 32.700 21.700" stroke="#2b2b2b" stroke-width="0.900" fill="none"/><path d="M27.500 4.500H33M29.500 2.500 27.500 4.500 29.500 6.500" stroke="#d9c2ee" stroke-width="1.200" fill="none"/><path d="M36 28V32H32Z" fill="#9a9a9a"/></svg>
<div class="a" style="left:9px;top:829px;width:38px;height:1px;background:#3a3a3a"></div>
<svg style="left:9px;top:829px" width="38" height="34" viewBox="0 0 38 34"><path d="M16 11.500 20 8H30V20.500L26 25H15" stroke="#b0b0b0" stroke-width="1.100" fill="none" stroke-linejoin="round"/><path d="M26 11.500V25M26 11.500 30 8M16 11.500V15" stroke="#b0b0b0" stroke-width="1.100" fill="none"/><path d="M9.500 19 26 11.500H16M9.500 19 15 25" stroke="#e6e6e6" stroke-width="1.100" fill="none" stroke-linejoin="round"/><circle cx="9.500" cy="19" r="1.600" fill="#d9c2ee"/><path d="M36 28V32H32Z" fill="#9a9a9a"/></svg>
<!-- overlay text -->
<div class="t" style="left:65px;top:110px;color:#fff;text-shadow:0 0 2px #000,0 1px 1px #000">User Perspective</div>
<div class="t" style="left:65px;top:128px;color:#fff;text-shadow:0 0 2px #000,0 1px 1px #000">(1) Plane</div>
<svg style="left:1270px;top:112px" width="92" height="76" viewBox="1270 112 92 76"><circle cx="1315.5" cy="176" r="7.5" fill="#2f62a8"/><circle cx="1314.7" cy="130.3" r="8" fill="#6f9e1e"/><path d="M1316.4 150.5V127" stroke="#2f8fef" stroke-width="2.2"/><path d="M1316.4 150.5 1347.8 150" stroke="#e0364f" stroke-width="2.2"/><circle cx="1283.9" cy="151.7" r="7.6" fill="#7a3a49" stroke="#d8344d" stroke-width="1.2"/><circle cx="1317" cy="172" r="8" fill="#4f6a2a" stroke="#8ccf1a" stroke-width="1.4"/><circle cx="1347.8" cy="150" r="8.3" fill="#e0364f"/><circle cx="1316.1" cy="126.7" r="8.6" fill="#2f8fef"/><text x="1316.2" y="131" font-family="Liberation Sans" font-size="11.5" font-weight="bold" fill="#0a1a33" text-anchor="middle">Z</text><text x="1347.9" y="154.2" font-family="Liberation Sans" font-size="11.5" font-weight="bold" fill="#3a0a12" text-anchor="middle">X</text></svg>
<div class="a" style="left:1330px;top:192px;width:28px;height:28px;border-radius:14px;background:rgba(30,30,30,.62)"></div>
<div class="a" style="left:1330px;top:222px;width:28px;height:28px;border-radius:14px;background:rgba(30,30,30,.62)"></div>
<div class="a" style="left:1330px;top:252px;width:28px;height:28px;border-radius:14px;background:rgba(30,30,30,.62)"></div>
<div class="a" style="left:1330px;top:282px;width:28px;height:28px;border-radius:14px;background:rgba(30,30,30,.62)"></div>
<svg style="left:1335px;top:197px" width="18" height="18" viewBox="0 0 18 18"><circle cx="10.8" cy="7.2" r="5.6" fill="#f0f0f0"/><path d="M6.500 11.500 2.300 15.700" stroke="#f0f0f0" stroke-width="2.200" stroke-linecap="round"/><path d="M10.800 4.200V10.200M7.800 7.200H13.800" stroke="#2a2a2a" stroke-width="1.200"/></svg>
<svg style="left:1335px;top:227px" width="18" height="18" viewBox="0 0 18 18"><path d="M5 9.500V4Q5.800 3 6.600 4V8V2.500Q7.500 1.500 8.400 2.500V8V2Q9.300 1 10.200 2V8V3Q11.100 2 12 3V10L13.500 7.500Q14.800 7 15 8.500L12.500 14Q11.500 16.500 9 16.500H8Q6 16.500 5 14.500L2.500 10.500Q3 8.500 5 9.500Z" fill="#f0f0f0"/></svg>
<svg style="left:1335px;top:257px" width="18" height="18" viewBox="0 0 18 18"><rect x="2.500" y="2.500" width="12" height="6" rx="3" fill="none" stroke="#f0f0f0" stroke-width="1.200"/><circle cx="11.500" cy="5.500" r="1.100" fill="#f0f0f0"/><path d="M4.500 5.500H7.500M6 4V7" stroke="#f0f0f0" stroke-width="1"/><rect x="5.500" y="10.500" width="6.500" height="5" fill="none" stroke="#f0f0f0" stroke-width="1.200"/><path d="M12.500 13 16 10.500V15.500ZM5 11.500H2.500V14.500" fill="none" stroke="#f0f0f0" stroke-width="1.100"/></svg>
<svg style="left:1335px;top:287px" width="18" height="18" viewBox="0 0 18 18"><path d="M4.500 2.500H13.500L16.500 15.500H1.500ZM3.500 7H14.500M2.500 11H15.500M7.500 2.500 6.500 15.500M10.500 2.500 11.500 15.500" fill="none" stroke="#f0f0f0" stroke-width="1.200"/></svg>
<!-- n panel -->
<div class="a" style="left:1565px;top:101px;width:20px;height:880px;background:#1b1b1b"></div>
<div class="a" style="left:1374px;top:101px;width:191px;height:276px;background:rgba(66,66,66,.9);border-radius:0 0 0 4px"></div>
<div class="a" style="left:1565px;top:106px;width:17px;height:40px;background:#424242;border-radius:0 4px 4px 0"></div>
<div class="a" style="left:1565px;top:151px;width:17px;height:39px;background:#232323;border:1px solid #333;border-left:none;border-radius:0 4px 4px 0"></div>
<div class="a" style="left:1565px;top:195px;width:17px;height:40px;background:#232323;border:1px solid #333;border-left:none;border-radius:0 4px 4px 0"></div>
<div class="a" style="left:1565px;top:106px;width:17px;height:40px;display:flex;align-items:center;justify-content:center"><span style="transform:rotate(90deg);font-size:12.2px;color:#fff;white-space:nowrap">Item</span></div>
<div class="a" style="left:1565px;top:151px;width:17px;height:39px;display:flex;align-items:center;justify-content:center"><span style="transform:rotate(90deg);font-size:12.2px;color:#bdbdbd;white-space:nowrap">Tool</span></div>
<div class="a" style="left:1565px;top:195px;width:17px;height:40px;display:flex;align-items:center;justify-content:center"><span style="transform:rotate(90deg);font-size:12.2px;color:#bdbdbd;white-space:nowrap">View</span></div>
<svg style="left:1382px;top:113px" width="10" height="7" viewBox="0 0 10 7"><path d="M1 1 5 5.500 9 1" stroke="#b8b8b8" stroke-width="1.200" fill="none"/></svg>
<div class="t ts" style="left:1396px;top:109px;color:#f0f0f0">Transform</div>
<svg style="left:1541px;top:113px" width="11" height="6" viewBox="0 0 10 6"><g fill="#1a1a1a"><rect x="0.5" y="0.5" width="1.400" height="1.400"/><rect x="3" y="0.5" width="1.400" height="1.400"/><rect x="5.5" y="0.5" width="1.400" height="1.400"/><rect x="8" y="0.5" width="1.400" height="1.400"/><rect x="0.5" y="3.5" width="1.400" height="1.400"/><rect x="3" y="3.5" width="1.400" height="1.400"/><rect x="5.5" y="3.5" width="1.400" height="1.400"/><rect x="8" y="3.5" width="1.400" height="1.400"/></g></svg>
<div class="t" style="left:1383px;top:139px;color:#d0d0d0">Median:</div>
<div class="a num" style="left:1383px;top:157px;width:166px;height:18px;border-radius:4px 4px 0 0"></div>
<div class="t ts" style="left:1398px;top:159px">X</div>
<div class="t ts" style="left:1436px;top:159px;width:100px;text-align:right">-0 m</div>
<div class="a num" style="left:1383px;top:176px;width:166px;height:18px;border-radius:0"></div>
<div class="t ts" style="left:1398px;top:178px">Y</div>
<div class="t ts" style="left:1436px;top:178px;width:100px;text-align:right">-0 m</div>
<div class="a num" style="left:1383px;top:196px;width:166px;height:19px;border-radius:0 0 4px 4px"></div>
<div class="t ts" style="left:1398px;top:198px">Z</div>
<div class="t ts" style="left:1436px;top:198px;width:100px;text-align:right">0 m</div>
<div class="a btn" style="left:1383px;top:219px;width:82px;height:18px;border-radius:4px 0 0 4px"></div>
<div class="a blue" style="left:1466px;top:219px;width:83px;height:18px;border-radius:0 4px 4px 0"></div>
<div class="t ts" style="left:1383px;top:221px;width:82px;text-align:center">Global</div>
<div class="t ts" style="left:1466px;top:221px;width:83px;text-align:center;color:#fff">Local</div>
<div class="t" style="left:1383px;top:243px;color:#d0d0d0">Vertices Data:</div>
<div class="t" style="left:1383px;top:309px;color:#d0d0d0">Edges Data:</div>
<div class="f num" style="left:1383px;top:263px;width:166px;height:18px"></div>
<div class="t ts" style="left:1398px;top:265px">Mean Bevel Weight</div>
<div class="t ts" style="left:1436px;top:265px;width:100px;text-align:right">0.00</div>
<div class="f num" style="left:1383px;top:285px;width:166px;height:18px"></div>
<div class="t ts" style="left:1398px;top:287px">Mean Vertex Crease</div>
<div class="t ts" style="left:1436px;top:287px;width:100px;text-align:right">0.00</div>
<div class="f num" style="left:1383px;top:329px;width:166px;height:18px"></div>
<div class="t ts" style="left:1398px;top:331px">Mean Bevel Weight</div>
<div class="t ts" style="left:1436px;top:331px;width:100px;text-align:right">0.00</div>
<div class="f num" style="left:1383px;top:351px;width:166px;height:18px"></div>
<div class="t ts" style="left:1398px;top:353px">Mean Crease</div>
<div class="t ts" style="left:1436px;top:353px;width:100px;text-align:right">0.00</div>
<!-- operator panel -->
<div class="a" style="left:61px;top:784px;width:280px;height:193px;background:#181818;border-radius:4px"></div>
<svg style="left:68px;top:794px" width="10" height="7" viewBox="0 0 10 7"><path d="M1 1 5 5.500 9 1" stroke="#8a8a8a" stroke-width="1.200" fill="none"/></svg>
<div class="t" style="left:83px;top:790px;color:#b4b4b4">Subdivide</div>
<div class="t" style="left:60px;top:820px;width:110px;text-align:right;color:#a6a6a6">Number of Cuts</div>
<div class="f" style="left:179px;top:817px;width:154px;height:20px;background:#1d1d1d;border:1px solid #4a4a4a"></div>
<div class="t" style="left:187px;top:820px;color:#fff">5</div>
<div class="a" style="left:194px;top:819px;width:2px;height:16px;background:#5a9cf5"></div>
<div class="t" style="left:60px;top:842px;width:110px;text-align:right;color:#a6a6a6">Smoothness</div>
<div class="f num" style="left:179px;top:840px;width:154px;height:19px"></div>
<div class="t ts" style="left:179px;top:842px;width:154px;text-align:center;color:#f0f0f0">0.000</div>
<div class="a" style="left:180px;top:865px;width:13px;height:13px;background:#4772b3;border-radius:3px"></div>
<svg style="left:181px;top:866px" width="11" height="11" viewBox="0 0 11 11"><path d="M2 5.500 4.500 8.500 9 2.500" stroke="#fff" stroke-width="1.600" fill="none"/></svg>
<div class="t" style="left:196px;top:864px;color:#f0f0f0">Create N-Gons</div>
<div class="t" style="left:60px;top:886px;width:110px;text-align:right;color:#a6a6a6">Quad Corner Type</div>
<div class="f dd" style="left:179px;top:884px;width:154px;height:19px;border-color:#454545"></div>
<div class="t" style="left:187px;top:886px;color:#f0f0f0">Straight Cut</div>
<svg style="left:321px;top:891px" width="8" height="6" viewBox="0 0 8 6"><path class="chev" d="M1 1 4 4 7 1"/></svg>
<div class="t" style="left:60px;top:908px;width:110px;text-align:right;color:#a6a6a6">Fractal</div>
<div class="f num" style="left:179px;top:906px;width:154px;height:19px"></div>
<div class="t ts" style="left:179px;top:908px;width:154px;text-align:center;color:#f0f0f0">0.000</div>
<div class="t" style="left:60px;top:930px;width:110px;text-align:right;color:#a6a6a6">Along Normal</div>
<div class="f num" style="left:179px;top:928px;width:154px;height:19px"></div>
<div class="t ts" style="left:179px;top:930px;width:154px;text-align:center;color:#f0f0f0">0.000</div>
<div class="t" style="left:60px;top:952px;width:110px;text-align:right;color:#a6a6a6">Random Seed</div>
<div class="f num" style="left:179px;top:950px;width:154px;height:19px"></div>
<div class="t ts" style="left:179px;top:952px;width:154px;text-align:center;color:#f0f0f0">0</div>
<svg style="left:335px;top:800px" width="70" height="52" viewBox="335 800 70 52"><path d="M338.200 826.700 358.600 806.800V816.500H401V837.200H358.600V847Z" fill="#ff0000"/></svg>
<!-- timeline -->
<div class="a" style="left:1px;top:984px;width:1584px;height:76px;background:#1d1d1d;border-radius:6px;overflow:hidden" id="tl">
<div class="a" style="left:0;top:0;width:1584px;height:25px;background:#2f2f2f"></div>
<div class="a" style="left:52.0px;top:48px;width:1473.7px;height:28px;background:#2c2c2c"></div>
<svg style="left:0;top:0" width="1585" height="76"><rect x="21.9" y="48" width="1.2" height="28" fill="#1e1e1e"/><rect x="51.4" y="48" width="1.2" height="28" fill="#0e0e0e"/><rect x="80.9" y="48" width="1.2" height="28" fill="#1e1e1e"/><rect x="110.4" y="48" width="1.2" height="28" fill="#0e0e0e"/><rect x="139.8" y="48" width="1.2" height="28" fill="#1e1e1e"/><rect x="169.3" y="48" width="1.2" height="28" fill="#0e0e0e"/><rect x="198.8" y="48" width="1.2" height="28" fill="#1e1e1e"/><rect x="228.2" y="48" width="1.2" height="28" fill="#0e0e0e"/><rect x="257.7" y="48" width="1.2" height="28" fill="#1e1e1e"/><rect x="287.2" y="48" width="1.2" height="28" fill="#0e0e0e"/><rect x="316.7" y="48" width="1.2" height="28" fill="#1e1e1e"/><rect x="346.1" y="48" width="1.2" height="28" fill="#0e0e0e"/><rect x="375.6" y="48" width="1.2" height="28" fill="#1e1e1e"/><rect x="405.1" y="48" width="1.2" height="28" fill="#0e0e0e"/><rect x="434.6" y="48" width="1.2" height="28" fill="#1e1e1e"/><rect x="464.0" y="48" width="1.2" height="28" fill="#0e0e0e"/><rect x="493.5" y="48" width="1.2" height="28" fill="#1e1e1e"/><rect x="523.0" y="48" width="1.2" height="28" fill="#0e0e0e"/><rect x="552.4" y="48" width="1.2" height="28" fill="#1e1e1e"/><rect x="581.9" y="48" width="1.2" height="28" fill="#0e0e0e"/><rect x="611.4" y="48" width="1.2" height="28" fill="#1e1e1e"/><rect x="640.9" y="48" width="1.2" height="28" fill="#0e0e0e"/><rect x="670.3" y="48" width="1.2" height="28" fill="#1e1e1e"/><rect x="699.8" y="48" width="1.2" height="28" fill="#0e0e0e"/><rect x="729.3" y="48" width="1.2" height="28" fill="#1e1e1e"/><rect x="758.8" y="48" width="1.2" height="28" fill="#0e0e0e"/><rect x="788.2" y="48" width="1.2" height="28" fill="#1e1e1e"/><rect x="817.7" y="48" width="1.2" height="28" fill="#0e0e0e"/><rect x="847.2" y="48" width="1.2" height="28" fill="#1e1e1e"/><rect x="876.6" y="48" width="1.2" height="28" fill="#0e0e0e"/><rect x="906.1" y="48" width="1.2" height="28" fill="#1e1e1e"/><rect x="935.6" y="48" width="1.2" height="28" fill="#0e0e0e"/><rect x="965.1" y="48" width="1.2" height="28" fill="#1e1e1e"/><rect x="994.5" y="48" width="1.2" height="28" fill="#0e0e0e"/><rect x="1024.0" y="48" width="1.2" height="28" fill="#1e1e1e"/><rect x="1053.5" y="48" width="1.2" height="28" fill="#0e0e0e"/><rect x="1083.0" y="48" width="1.2" height="28" fill="#1e1e1e"/><rect x="1112.4" y="48" width="1.2" height="28" fill="#0e0e0e"/><rect x="1141.9" y="48" width="1.2" height="28" fill="#1e1e1e"/><rect x="1171.4" y="48" width="1.2" height="28" fill="#0e0e0e"/><rect x="1200.9" y="48" width="1.2" height="28" fill="#1e1e1e"/><rect x="1230.3" y="48" width="1.2" height="28" fill="#0e0e0e"/><rect x="1259.8" y="48" width="1.2" height="28" fill="#1e1e1e"/><rect x="1289.3" y="48" width="1.2" height="28" fill="#0e0e0e"/><rect x="1318.7" y="48" width="1.2" height="28" fill="#1e1e1e"/><rect x="1348.2" y="48" width="1.2" height="28" fill="#0e0e0e"/><rect x="1377.7" y="48" width="1.2" height="28" fill="#1e1e1e"/><rect x="1407.2" y="48" width="1.2" height="28" fill="#0e0e0e"/><rect x="1436.6" y="48" width="1.2" height="28" fill="#1e1e1e"/><rect x="1466.1" y="48" width="1.2" height="28" fill="#0e0e0e"/><rect x="1495.6" y="48" width="1.2" height="28" fill="#1e1e1e"/><rect x="1525.1" y="48" width="1.2" height="28" fill="#0e0e0e"/><rect x="1554.5" y="48" width="1.2" height="28" fill="#1e1e1e"/></svg>
<div class="a" style="left:56.9px;top:40px;width:2px;height:36px;background:#4772b3"></div>
<div class="a" style="left:8px;top:65px;width:1569px;height:8px;border-radius:4px;background:#545454"></div>
<div class="a" style="left:9px;top:66px;width:6px;height:6px;border-radius:3px;background:#2a2a2a"></div>
<div class="a" style="left:1569px;top:66px;width:6px;height:6px;border-radius:3px;background:#2a2a2a"></div>
<div class="a blue" style="left:45.5px;top:28px;width:24px;height:17px;border-radius:4px"></div>
<div class="t" style="left:45.5px;top:30px;width:24px;text-align:center;color:#fff">1</div>
<div class="t" style="left:91.0px;top:30px;width:40px;text-align:center;color:#bdbdbd">10</div>
<div class="t" style="left:149.9px;top:30px;width:40px;text-align:center;color:#bdbdbd">20</div>
<div class="t" style="left:208.8px;top:30px;width:40px;text-align:center;color:#bdbdbd">30</div>
<div class="t" style="left:267.8px;top:30px;width:40px;text-align:center;color:#bdbdbd">40</div>
<div class="t" style="left:326.7px;top:30px;width:40px;text-align:center;color:#bdbdbd">50</div>
<div class="t" style="left:385.7px;top:30px;width:40px;text-align:center;color:#bdbdbd">60</div>
<div class="t" style="left:444.6px;top:30px;width:40px;text-align:center;color:#bdbdbd">70</div>
<div class="t" style="left:503.6px;top:30px;width:40px;text-align:center;color:#bdbdbd">80</div>
<div class="t" style="left:562.5px;top:30px;width:40px;text-align:center;color:#bdbdbd">90</div>
<div class="t" style="left:621.5px;top:30px;width:40px;text-align:center;color:#bdbdbd">100</div>
<div class="t" style="left:680.4px;top:30px;width:40px;text-align:center;color:#bdbdbd">110</div>
<div class="t" style="left:739.4px;top:30px;width:40px;text-align:center;color:#bdbdbd">120</div>
<div class="t" style="left:798.3px;top:30px;width:40px;text-align:center;color:#bdbdbd">130</div>
<div class="t" style="left:857.2px;top:30px;width:40px;text-align:center;color:#bdbdbd">140</div>
<div class="t" style="left:916.2px;top:30px;width:40px;text-align:center;color:#bdbdbd">150</div>
<div class="t" style="left:975.1px;top:30px;width:40px;text-align:center;color:#bdbdbd">160</div>
<div class="t" style="left:1034.1px;top:30px;width:40px;text-align:center;color:#bdbdbd">170</div>
<div class="t" style="left:1093.0px;top:30px;width:40px;text-align:center;color:#bdbdbd">180</div>
<div class="t" style="left:1152.0px;top:30px;width:40px;text-align:center;color:#bdbdbd">190</div>
<div class="t" style="left:1210.9px;top:30px;width:40px;text-align:center;color:#bdbdbd">200</div>
<div class="t" style="left:1269.9px;top:30px;width:40px;text-align:center;color:#bdbdbd">210</div>
<div class="t" style="left:1328.8px;top:30px;width:40px;text-align:center;color:#bdbdbd">220</div>
<div class="t" style="left:1387.8px;top:30px;width:40px;text-align:center;color:#bdbdbd">230</div>
<div class="t" style="left:1446.7px;top:30px;width:40px;text-align:center;color:#bdbdbd">240</div>
<div class="t" style="left:1505.7px;top:30px;width:40px;text-align:center;color:#bdbdbd">250</div>
</div>
<div class="f dd" style="left:9px;top:988px;width:31px;height:18px"></div>
<svg style="left:12px;top:989px" width="16" height="16" viewBox="0 0 16 16"><circle cx="8" cy="8" r="6.800" fill="#e8e8e8"/><path d="M9.500 4.500 6.500 8 9 11" stroke="#222" stroke-width="1.600" fill="none"/></svg>
<svg style="left:30px;top:995px" width="8" height="6" viewBox="0 0 8 6"><path class="chev" d="M1 1 4 4 7 1"/></svg>
<div class="a dd" style="left:46px;top:988px;width:71px;height:18px;border-radius:4px 0 0 4px"></div>
<div class="a dd" style="left:116px;top:988px;width:61px;height:18px;border-radius:0 4px 4px 0"></div>
<div class="t ts" style="left:53px;top:990px;color:#e6e6e6">Playback</div>
<svg style="left:106px;top:995px" width="8" height="6" viewBox="0 0 8 6"><path class="chev" d="M1 1 4 4 7 1"/></svg>
<div class="t ts" style="left:124px;top:990px;color:#e6e6e6">Keying</div>
<svg style="left:166px;top:995px" width="8" height="6" viewBox="0 0 8 6"><path class="chev" d="M1 1 4 4 7 1"/></svg>
<div class="t" style="left:186px;top:990px">View</div>
<div class="t" style="left:226px;top:990px">Marker</div>
<div class="a btn" style="left:701px;top:988px;width:18px;height:18px;border-radius:4px 0 0 4px"></div>
<div class="a" style="left:720px;top:988px;width:19px;height:18px;border-radius:0 4px 4px 0;background:#2c2c2c;border:1px solid #363636"></div>
<svg style="left:702px;top:989px" width="16" height="16" viewBox="0 0 16 16"><circle cx="8" cy="8" r="4.500" fill="none" stroke="#d0d0d0" stroke-width="1.200"/></svg>
<svg style="left:726px;top:995px" width="8" height="6" viewBox="0 0 8 6"><path d="M1 1 4 4 7 1" stroke="#5a5a5a" fill="none" stroke-width="1.200"/></svg>
<div class="a btn" style="left:746px;top:988px;width:19px;height:18px;border-radius:4px 0 0 4px"></div>
<div class="a btn" style="left:766px;top:988px;width:19px;height:18px;border-radius:0"></div>
<div class="a btn" style="left:786px;top:988px;width:19px;height:18px;border-radius:0"></div>
<div class="a btn" style="left:806px;top:988px;width:19px;height:18px;border-radius:0"></div>
<div class="a btn" style="left:826px;top:988px;width:19px;height:18px;border-radius:0"></div>
<div class="a btn" style="left:846px;top:988px;width:18px;height:18px;border-radius:0 4px 4px 0"></div>
<svg style="left:746px;top:988px" width="119" height="18" viewBox="0 0 119 18" fill="#f0f0f0"><path d="M5 4.500H6.800V13.500H5ZM13 4.500V13.500L7 9Z"/><path d="M28.500 5 32.500 9 28.500 13 24.500 9ZM39 5V13L33.500 9Z"/><path d="M54 3.500V14.500L45.500 9Z"/><path d="M65 3.500V14.500L73.500 9Z"/><path d="M90.500 5 94.500 9 90.500 13 86.500 9ZM80 5V13L85.500 9Z"/><path d="M112.500 4.500H114.300V13.500H112.500ZM105.500 4.500V13.500L111.500 9Z"/></svg>
<div class="f num" style="left:1306px;top:988px;width:73px;height:18px"></div>
<div class="t ts" style="left:1306px;top:990px;width:73px;text-align:center;color:#f0f0f0">1</div>
<div class="a btn" style="left:1386px;top:988px;width:18px;height:18px;border-radius:4px 0 0 4px"></div>
<svg style="left:1387px;top:989px" width="16" height="16" viewBox="0 0 16 16"><circle cx="8" cy="9" r="5.300" fill="none" stroke="#e8e8e8" stroke-width="1.200"/><path d="M8 6V9.500H10.500M6.500 1.500H9.500M8 1.500V3.500M12.500 3.500 14 2" stroke="#e8e8e8" stroke-width="1.200" fill="none"/></svg>
<div class="a num" style="left:1405px;top:988px;width:88px;height:18px"></div>
<div class="a num" style="left:1494px;top:988px;width:84px;height:18px;border-radius:0 4px 4px 0"></div>
<div class="t ts" style="left:1420px;top:990px;color:#f0f0f0">Start</div>
<div class="t ts" style="left:1440px;top:990px;width:40px;text-align:right;color:#f0f0f0">1</div>
<div class="t ts" style="left:1509px;top:990px;color:#f0f0f0">End</div>
<div class="t ts" style="left:1525px;top:990px;width:40px;text-align:right;color:#f0f0f0">250</div>
<svg style="left:1px;top:1024px" width="6" height="10" viewBox="0 0 6 10"><path d="M1 1 5 5 1 9" stroke="#8a8a8a" fill="none" stroke-width="1"/></svg>
<div class="a" style="left:1579px;top:1018px;width:4px;height:28px;background:#2c2c2c;border-radius:2px"></div>
<svg style="left:1578px;top:1025px" width="6" height="10" viewBox="0 0 6 10"><path d="M5 1 1 5 5 9" stroke="#8a8a8a" fill="none" stroke-width="1"/></svg>
<!-- status -->
<div class="a" style="left:0;top:1060px;width:1920px;height:20px;background:#181818"></div>
<svg style="left:11px;top:1062px" width="13" height="17" viewBox="0 0 13 17"><rect x="1.5" y="1.5" width="10" height="14" rx="4" fill="none" stroke="#b0b0b0" stroke-width="1.1"/><path d="M1.500 7V5.500Q1.500 1.500 6.500 1.500V7Z" fill="#b0b0b0"/></svg>
<svg style="left:222px;top:1062px" width="13" height="17" viewBox="0 0 13 17"><rect x="1.5" y="1.5" width="10" height="14" rx="4" fill="none" stroke="#b0b0b0" stroke-width="1.1"/><rect x="5.200" y="3.500" width="2.600" height="4.500" rx="1" fill="#b0b0b0"/></svg>
<svg style="left:433px;top:1062px" width="13" height="17" viewBox="0 0 13 17"><rect x="1.5" y="1.5" width="10" height="14" rx="4" fill="none" stroke="#b0b0b0" stroke-width="1.1"/><path d="M11.500 7V5.500Q11.500 1.500 6.500 1.500V7Z" fill="#b0b0b0"/></svg>
<div class="t" style="left:34px;top:1063px;color:#a8a8a8">Select</div>
<div class="t" style="left:245px;top:1063px;color:#a8a8a8">Rotate View</div>
<div class="t" style="left:456px;top:1063px;color:#a8a8a8">Call Menu</div>
<div class="t" style="left:1860px;top:1063px;width:48px;text-align:right;color:#8a8a8a">4.1.1</div>
<!-- outliner -->
<div class="a" style="left:1588px;top:50px;width:332px;height:321px;background:#282828;border-radius:6px 0 0 6px;overflow:hidden">
<div class="a" style="left:0;top:0;width:332px;height:26px;background:#292929"></div>
<div class="a" style="left:0;top:67px;width:332px;height:20px;background:#2b2b2b"></div>
<div class="a" style="left:0;top:107px;width:332px;height:20px;background:#2b2b2b"></div>
<div class="a" style="left:0;top:147px;width:332px;height:20px;background:#2b2b2b"></div>
<div class="a" style="left:0;top:187px;width:332px;height:20px;background:#2b2b2b"></div>
<div class="a" style="left:0;top:227px;width:332px;height:20px;background:#2b2b2b"></div>
<div class="a" style="left:0;top:267px;width:332px;height:20px;background:#2b2b2b"></div>
<div class="a" style="left:0;top:307px;width:332px;height:20px;background:#2b2b2b"></div>
<div class="a" style="left:0;top:347px;width:332px;height:20px;background:#2b2b2b"></div>
</div>
<div class="f dd" style="left:1596px;top:53px;width:32px;height:18px;background:#272727;border-color:#414141"></div>
<svg style="left:1599px;top:54px" width="16" height="16" viewBox="0 0 16 16"><rect x="1.500" y="1.500" width="5" height="3" fill="#d8d8d8"/><rect x="8" y="6.500" width="6.500" height="3" fill="#d8d8d8"/><rect x="8" y="11.500" width="6.500" height="3" fill="#d8d8d8"/><path d="M3.500 5V13H8M3.500 8H8" stroke="#d8d8d8" stroke-width="1.100" fill="none"/></svg>
<svg style="left:1617px;top:60px" width="8" height="6" viewBox="0 0 8 6"><path class="chev" d="M1 1 4 4 7 1"/></svg>
<div class="f dd" style="left:1633px;top:53px;width:32px;height:18px;background:#272727;border-color:#414141"></div>
<svg style="left:1636px;top:54px" width="16" height="16" viewBox="0 0 16 16"><path d="M1.500 5.500V14.500H10.500M3.500 3.500V12.500H12.500" stroke="#d8d8d8" stroke-width="1.100" fill="none"/><rect x="5.500" y="1.500" width="9" height="9" fill="none" stroke="#d8d8d8" stroke-width="1.100"/><path d="M6.500 9.500 9 5.500 11 8 12 7 13.500 9.500Z" fill="#d8d8d8"/><circle cx="12" cy="4" r="1" fill="#d8d8d8"/></svg>
<svg style="left:1654px;top:60px" width="8" height="6" viewBox="0 0 8 6"><path class="chev" d="M1 1 4 4 7 1"/></svg>
<div class="f txt" style="left:1685px;top:53px;width:115px;height:18px"></div>
<svg style="left:1689px;top:55px" width="14" height="14" viewBox="0 0 14 14"><circle cx="8.500" cy="5.500" r="3.800" fill="none" stroke="#d8d8d8" stroke-width="1.200"/><path d="M5.800 8.200 1.500 12.500" stroke="#d8d8d8" stroke-width="1.300"/></svg>
<div class="t" style="left:1711px;top:55px;color:#777">Search</div>
<div class="f dd" style="left:1855px;top:53px;width:32px;height:18px;background:#272727;border-color:#414141"></div>
<svg style="left:1858px;top:54px" width="16" height="16" viewBox="0 0 16 16"><path d="M1.500 2.500H14.500L9.500 8.500V14L6.500 12V8.500Z" fill="none" stroke="#d8d8d8" stroke-width="1.200" stroke-linejoin="round"/></svg>
<svg style="left:1876px;top:60px" width="8" height="6" viewBox="0 0 8 6"><path class="chev" d="M1 1 4 4 7 1"/></svg>
<div class="f btn" style="left:1892px;top:53px;width:20px;height:18px"></div>
<svg style="left:1894px;top:54px" width="16" height="16" viewBox="0 0 16 16"><path d="M1.500 4.500V2.500H8" stroke="#d8d8d8" stroke-width="1.100" fill="none"/><path d="M2.500 6.500H11.500V14.500H2.500Z" fill="none" stroke="#d8d8d8" stroke-width="1.100"/><path d="M5.500 9.500H8.500" stroke="#d8d8d8" stroke-width="1.100"/><circle cx="12" cy="4" r="3.600" fill="#f0f0f0"/><path d="M12 1.800V6.200M9.800 4H14.200" stroke="#3a3a3a" stroke-width="1.200"/></svg>
<svg style="left:1609px;top:78px" width="19" height="18" viewBox="0 0 19 18"><rect x="3" y="3" width="13" height="3.500" fill="#d8d8d8"/><path d="M4 7.500H15V15H4Z" fill="#d8d8d8"/><rect x="7.500" y="9.500" width="4" height="1.500" fill="#282828"/></svg>
<div class="t" style="left:1632px;top:80px;color:#d0d0d0">Scene Collection</div>
<svg style="left:1613px;top:104px" width="10" height="7" viewBox="0 0 10 7"><path d="M1 1 5 5.500 9 1" stroke="#b0b0b0" stroke-width="1.200" fill="none"/></svg>
<svg style="left:1628px;top:98px" width="19" height="18" viewBox="0 0 19 18"><rect x="0" y="0" width="19" height="18" rx="4" fill="#4c4c4c"/><rect x="3" y="3" width="13" height="3.500" fill="#d8d8d8"/><path d="M4 7.500H15V15H4Z" fill="#d8d8d8"/><rect x="7.500" y="9.500" width="4" height="1.500" fill="#4c4c4c"/></svg>
<div class="t" style="left:1652px;top:100px;color:#d0d0d0">Collection</div>
<svg style="left:1855px;top:100px" width="11" height="11" viewBox="0 0 11 11"><rect x="0" y="0" width="11" height="11" rx="1.500" fill="#e8e8e8"/><path d="M2 5.500 4.500 8.500 9 2.500" stroke="#282828" stroke-width="1.600" fill="none"/></svg>
<svg style="left:1872px;top:101px" width="14" height="10" viewBox="0 0 14 10"><path d="M0.500 5Q7 -2.500 13.500 5Q7 12.500 0.500 5Z" fill="#e8e8e8"/><circle cx="7" cy="5" r="2.800" fill="#282828"/><circle cx="7" cy="5" r="1.400" fill="#e8e8e8"/></svg>
<svg style="left:1892px;top:100px" width="14" height="12" viewBox="0 0 14 12"><path d="M0.500 2.500H3.500L4.500 0.500H9.500L10.500 2.500H13.500V11.500H0.500Z" fill="#e8e8e8"/><circle cx="7" cy="6.800" r="3.500" fill="#282828"/><circle cx="7" cy="6.800" r="2.300" fill="none" stroke="#e8e8e8" stroke-width="1.100"/></svg>
<svg style="left:1590px;top:118px" width="16" height="16" viewBox="0 0 16 16"><path d="M3 4.500H10M3 12.500H11M2.500 5V11.500M12.500 6.500V11.500" stroke="#c0c0c0" stroke-width="1.100" fill="none"/><rect x="1" y="3" width="3" height="3" fill="#282828" stroke="#c0c0c0"/><rect x="1" y="11" width="3" height="3" fill="#282828" stroke="#c0c0c0"/><rect x="11" y="11" width="3" height="3" fill="#282828" stroke="#c0c0c0"/><rect x="10.500" y="1.500" width="4.500" height="4.500" fill="#e8e8e8"/></svg>
<div class="a" style="left:1617px;top:121px;width:1px;height:10px;background:#555"></div>
<svg style="left:1635px;top:122px" width="7" height="10" viewBox="0 0 7 10"><path d="M1 1 5.500 5 1 9" stroke="#b0b0b0" stroke-width="1.200" fill="none"/></svg>
<svg style="left:1648px;top:117px" width="20" height="19" viewBox="0 0 20 19"><rect x="0.500" y="0.500" width="19" height="18" rx="4.500" fill="#555" stroke="#666"/><path d="M4.500 4.500H15.500L10 15.500Z" fill="none" stroke="#d4894a" stroke-width="2.600" stroke-linejoin="miter"/></svg>
<div class="t" style="left:1672px;top:120px;color:#d0d0d0">Plane</div>
<svg style="left:1720px;top:117px" width="20" height="19" viewBox="0 0 20 19"><rect x="0.500" y="0.500" width="19" height="18" rx="4.500" fill="#1d3f37" stroke="#2a5d50"/><path d="M5 5H15L10 14Z" fill="none" stroke="#3ddc9c" stroke-width="1.200"/><rect x="3.500" y="3.500" width="3" height="3" fill="#1d3f37" stroke="#3ddc9c"/><rect x="13.500" y="3.500" width="3" height="3" fill="#1d3f37" stroke="#3ddc9c"/><rect x="8.500" y="12.500" width="3" height="3" fill="#1d3f37" stroke="#3ddc9c"/></svg>
<svg style="left:1872px;top:121px" width="14" height="10" viewBox="0 0 14 10"><path d="M0.500 5Q7 -2.500 13.500 5Q7 12.500 0.500 5Z" fill="#e8e8e8"/><circle cx="7" cy="5" r="2.800" fill="#282828"/><circle cx="7" cy="5" r="1.400" fill="#e8e8e8"/></svg>
<svg style="left:1892px;top:120px" width="14" height="12" viewBox="0 0 14 12"><path d="M0.500 2.500H3.500L4.500 0.500H9.500L10.500 2.500H13.500V11.500H0.500Z" fill="#e8e8e8"/><circle cx="7" cy="6.800" r="3.500" fill="#282828"/><circle cx="7" cy="6.800" r="2.300" fill="none" stroke="#e8e8e8" stroke-width="1.100"/></svg>
<!-- properties -->
<div class="a" style="left:1588px;top:375px;width:332px;height:685px;background:#303030;border-radius:6px 0 0 6px;overflow:hidden">
<div class="a" style="left:0;top:26px;width:28px;height:659px;background:#1c1c1c"></div>
<div class="a" style="left:2px;top:254px;width:26px;height:27px;background:#303030;border-radius:4px 0 0 4px"></div>
</div>
<div class="f dd" style="left:1596px;top:378px;width:32px;height:18px;background:#262626"></div>
<svg style="left:1599px;top:379px" width="16" height="16" viewBox="0 0 16 16"><rect x="1" y="1.500" width="14" height="6" rx="3" fill="#e8e8e8"/><rect x="1" y="9" width="14" height="6" rx="3" fill="#e8e8e8"/><path d="M7.500 2.800H12Q13.700 2.800 13.700 4.500T12 6.200H7.500Z" fill="#262626"/><path d="M10.300 10.300H12Q13.700 10.300 13.700 12T12 13.700H10.300Z" fill="#262626"/></svg>
<svg style="left:1617px;top:385px" width="8" height="6" viewBox="0 0 8 6"><path class="chev" d="M1 1 4 4 7 1"/></svg>
<div class="f txt" style="left:1697px;top:378px;width:115px;height:18px"></div>
<svg style="left:1701px;top:380px" width="14" height="14" viewBox="0 0 14 14"><circle cx="8.500" cy="5.500" r="3.800" fill="none" stroke="#d8d8d8" stroke-width="1.200"/><path d="M5.800 8.200 1.500 12.500" stroke="#d8d8d8" stroke-width="1.300"/></svg>
<div class="t" style="left:1723px;top:380px;color:#777">Search</div>
<div class="f dd" style="left:1892px;top:378px;width:20px;height:18px;background:#262626"></div>
<svg style="left:1898px;top:385px" width="8" height="6" viewBox="0 0 8 6"><path class="chev" d="M1 1 4 4 7 1"/></svg>
<svg style="left:1594.500px;top:413px" width="16" height="16" viewBox="0 0 16 16"><path d="M4.300 1.500V8" stroke="#d8d8d8" stroke-width="1.100"/><rect x="2.300" y="8" width="4" height="6.500" rx="2" fill="#b4b4b4"/><path d="M9 1.500V4.200Q9 6.500 10.600 7V13.700Q10.600 14.800 11.700 14.800T12.800 13.700V7Q14.400 6.500 14.400 4.200V1.500L13 1.500V4.500H10.400V1.500Z" fill="#d8d8d8"/><circle cx="11.700" cy="13.300" r="0.600" fill="#1c1c1c"/></svg>
<svg style="left:1594.500px;top:449px" width="16" height="16" viewBox="0 0 16 16"><path d="M1.500 5.500H12.500V13.500H1.500Z" fill="none" stroke="#d8d8d8" stroke-width="1.200"/><path d="M3.500 5V3H9.500V5" stroke="#d8d8d8" stroke-width="1.100" fill="none"/><rect x="3.500" y="7.500" width="5" height="4" fill="#d8d8d8"/><path d="M10.500 8H11.500M10.500 10.500H11.500M13 7 14.500 6V13L13 12" stroke="#d8d8d8" stroke-width="1" fill="none"/></svg>
<svg style="left:1594.500px;top:477px" width="16" height="16" viewBox="0 0 16 16"><path d="M1.500 2.500H14.500V6H1.500Z" fill="#d8d8d8"/><path d="M3 7V14.500H13V7" fill="none" stroke="#d8d8d8" stroke-width="1.200"/><path d="M5 13 7 9.500 8.500 11.500 9.500 10.500 11 13Z" fill="#d8d8d8"/></svg>
<svg style="left:1594.500px;top:505px" width="16" height="16" viewBox="0 0 16 16"><path d="M1.500 5.500V14.500H10.500M3.500 3.500V12.500H12.500" stroke="#d8d8d8" stroke-width="1.100" fill="none"/><rect x="5.500" y="1.500" width="9" height="9" fill="none" stroke="#d8d8d8" stroke-width="1.100"/><path d="M6.500 9.500 9 5.500 11 8 12 7 13.500 9.500Z" fill="#d8d8d8"/></svg>
<svg style="left:1594.500px;top:533px" width="16" height="16" viewBox="0 0 16 16"><path d="M5.500 1.500 9 10.500H2z" fill="#d8d8d8"/><circle cx="12.300" cy="4" r="1.700" fill="#d8d8d8"/><circle cx="10.800" cy="11.300" r="2.900" fill="#1c1c1c" stroke="#d8d8d8" stroke-width="1.200"/></svg>
<svg style="left:1594.500px;top:562px" width="16" height="16" viewBox="0 0 16 16"><circle cx="8" cy="8" r="5.800" fill="none" stroke="#c9555f" stroke-width="1.300"/><path d="M4 5Q6 4 7 6T9.500 8.500Q8 11 6.500 10.500T4 5M10 3.500Q12 5 11 6.500M2 13.500 14 2.500" fill="none" stroke="#c9555f" stroke-width="1.100"/></svg>
<svg style="left:1594.500px;top:598px" width="16" height="16" viewBox="0 0 16 16"><rect x="1.500" y="2" width="13" height="3.300" fill="none" stroke="#d8d8d8" stroke-width="1.100"/><path d="M2.500 6.500H13.500V14H2.500Z" fill="none" stroke="#d8d8d8" stroke-width="1.100"/><path d="M6 9.500H10" stroke="#d8d8d8" stroke-width="1.300"/></svg>
<svg style="left:1594.500px;top:634px" width="16" height="16" viewBox="0 0 16 16"><rect x="4" y="4" width="8" height="8" fill="#ef9a55"/><path d="M1.500 5V1.500H5M11 1.500H14.500V5M14.500 11V14.500H11M5 14.500H1.500V11" fill="none" stroke="#ef9a55" stroke-width="1.200"/></svg>
<svg style="left:1594.500px;top:662px" width="16" height="16" viewBox="0 0 16 16"><path d="M13.500 2.500Q10 1 8 3.500T8 7.500L2.500 13Q3 14.500 4.500 14L10 8.500Q12.500 9.500 14 7.500T14.500 4L12 6.500 10 6 9.500 4.500Z" fill="#5f86d6"/></svg>
<svg style="left:1594.500px;top:690px" width="16" height="16" viewBox="0 0 16 16"><circle cx="3.500" cy="4" r="1.700" fill="#5f86d6"/><circle cx="12.500" cy="4" r="1.500" fill="#5f86d6"/><circle cx="12.500" cy="13" r="1.500" fill="#5f86d6"/><path d="M3.500 4 12.500 13M3.500 4H12.500M3.500 4V13" stroke="#5f86d6" stroke-width="1.100" fill="none"/></svg>
<svg style="left:1594.500px;top:718px" width="16" height="16" viewBox="0 0 16 16"><circle cx="8" cy="8.500" r="5.500" fill="none" stroke="#5f86d6" stroke-width="1.300" stroke-dasharray="26 9"/><circle cx="8" cy="8.500" r="2.200" fill="#5f86d6"/><circle cx="12.500" cy="3" r="1.300" fill="#5f86d6"/></svg>
<svg style="left:1594.500px;top:746px" width="16" height="16" viewBox="0 0 16 16"><ellipse cx="6.500" cy="9.500" rx="5" ry="4" transform="rotate(-30 6.500 9.500)" fill="none" stroke="#5f86d6" stroke-width="1.300"/><circle cx="6.500" cy="9.500" r="1.800" fill="#5f86d6"/><path d="M10 5.500 14 2.500M11.500 8 14.500 6" stroke="#5f86d6" stroke-width="1.300"/></svg>
<svg style="left:1594.500px;top:774px" width="16" height="16" viewBox="0 0 16 16"><path d="M3.500 3.500H12.500L8 12.500Z" fill="none" stroke="#3ddc9c" stroke-width="1.200"/><rect x="2" y="2" width="3" height="3" fill="#1c1c1c" stroke="#3ddc9c"/><rect x="11" y="2" width="3" height="3" fill="#1c1c1c" stroke="#3ddc9c"/><rect x="6.500" y="11" width="3" height="3" fill="#1c1c1c" stroke="#3ddc9c"/></svg>
<svg style="left:1594.500px;top:802px" width="16" height="16" viewBox="0 0 16 16"><circle cx="8" cy="8" r="6" fill="none" stroke="#c9555f" stroke-width="1.300"/><path d="M8 2A6 6 0 0 0 2 8H8ZM8 8H14A6 6 0 0 1 8 14Z" fill="#c9555f"/></svg>
<div class="a" style="left:1593px;top:439px;width:20px;height:1px;background:#262626"></div>
<div class="a" style="left:1593px;top:588px;width:20px;height:1px;background:#262626"></div>
<div class="a" style="left:1593px;top:624px;width:20px;height:1px;background:#262626"></div>
<div class="a" style="left:1593px;top:828px;width:20px;height:1px;background:#262626"></div>
<svg style="left:1626px;top:410px" width="16" height="16" viewBox="0 0 16 16"><rect x="4.500" y="4.500" width="7" height="7" fill="#e8e8e8"/><path d="M1.500 5V1.500H5M11 1.500H14.500V5M14.500 11V14.500H11M5 14.500H1.500V11" fill="none" stroke="#e8e8e8" stroke-width="1.100"/></svg>
<div class="t" style="left:1650px;top:411px;color:#e0e0e0">Plane</div>
<svg style="left:1895px;top:410px" width="16" height="16" viewBox="0 0 16 16"><path d="M9.500 2 14 6.500 12.500 7 10 9.500 9.500 12.500 3.500 6.500 6.500 6 9 3.500ZM6 10 1.500 14.500" stroke="#b0b0b0" stroke-width="1.200" fill="none" stroke-linejoin="round" stroke-linecap="round"/></svg>
<div class="a" style="left:1624px;top:444px;width:288px;height:20px;background:#1d1d1d;border:1px solid #3d3d3d;border-radius:4px"></div>
<div class="a" style="left:1624px;top:444px;width:32px;height:20px;background:#282828;border:1px solid #3d3d3d;border-radius:4px 0 0 4px"></div>
<svg style="left:1628px;top:446px" width="16" height="16" viewBox="0 0 16 16"><rect x="4.500" y="4.500" width="7" height="7" fill="#e8e8e8"/><path d="M1.500 5V1.500H5M11 1.500H14.500V5M14.500 11V14.500H11M5 14.500H1.500V11" fill="none" stroke="#e8e8e8" stroke-width="1.100"/></svg>
<svg style="left:1645px;top:452px" width="8" height="6" viewBox="0 0 8 6"><path class="chev" d="M1 1 4 4 7 1"/></svg>
<div class="t" style="left:1663px;top:447px;color:#e6e6e6">Plane</div>
<div class="a" style="left:1624px;top:474px;width:288px;height:281px;background:#3b3b3b;border-radius:4px"></div>
<svg style="left:1632px;top:484px" width="10" height="7" viewBox="0 0 10 7"><path d="M1 1 5 5.500 9 1" stroke="#a8a8a8" stroke-width="1.200" fill="none"/></svg>
<div class="t ts" style="left:1646px;top:480px;color:#e6e6e6">Transform</div>
<svg style="left:1895px;top:484px" width="10" height="6" viewBox="0 0 10 6"><g fill="#1c1c1c"><rect x="0.5" y="0.5" width="1.400" height="1.400"/><rect x="3" y="0.5" width="1.400" height="1.400"/><rect x="5.5" y="0.5" width="1.400" height="1.400"/><rect x="8" y="0.5" width="1.400" height="1.400"/><rect x="0.5" y="3.5" width="1.400" height="1.400"/><rect x="3" y="3.5" width="1.400" height="1.400"/><rect x="5.5" y="3.5" width="1.400" height="1.400"/><rect x="8" y="3.5" width="1.400" height="1.400"/></g></svg>
<div class="a num" style="left:1738px;top:508px;width:125px;height:18px;border-radius:4px 4px 0 0"></div>
<div class="t ts" style="left:1738px;top:510px;width:125px;text-align:center;color:#f0f0f0">0 m</div>
<div class="t ts" style="left:1628px;top:510px;width:100px;text-align:right;color:#e0e0e0">Location X</div>
<svg style="left:1867px;top:509px" width="16" height="15" viewBox="0 0 16 15"><rect x="5.500" y="6.500" width="9" height="6.500" fill="none" stroke="#c8c8c8" stroke-width="1.100"/><path d="M6.500 6.500V4Q6.500 1.500 4 1.500T1.500 4V5.500" fill="none" stroke="#c8c8c8" stroke-width="1.100"/><path d="M10 9V10.500" stroke="#c8c8c8" stroke-width="1.200"/></svg>
<div class="a" style="left:1892px;top:515px;width:4px;height:4px;border-radius:2px;background:#e0e0e0"></div>
<div class="a num" style="left:1738px;top:527.5px;width:125px;height:18px;border-radius:0"></div>
<div class="t ts" style="left:1738px;top:529.5px;width:125px;text-align:center;color:#f0f0f0">0 m</div>
<div class="t ts" style="left:1628px;top:529.5px;width:100px;text-align:right;color:#e0e0e0">Y</div>
<svg style="left:1867px;top:528.5px" width="16" height="15" viewBox="0 0 16 15"><rect x="5.500" y="6.500" width="9" height="6.500" fill="none" stroke="#c8c8c8" stroke-width="1.100"/><path d="M6.500 6.500V4Q6.500 1.500 4 1.500T1.500 4V5.500" fill="none" stroke="#c8c8c8" stroke-width="1.100"/><path d="M10 9V10.500" stroke="#c8c8c8" stroke-width="1.200"/></svg>
<div class="a" style="left:1892px;top:534.5px;width:4px;height:4px;border-radius:2px;background:#e0e0e0"></div>
<div class="a num" style="left:1738px;top:547px;width:125px;height:18px;border-radius:0 0 4px 4px"></div>
<div class="t ts" style="left:1738px;top:549px;width:125px;text-align:center;color:#f0f0f0">0 m</div>
<div class="t ts" style="left:1628px;top:549px;width:100px;text-align:right;color:#e0e0e0">Z</div>
<svg style="left:1867px;top:548px" width="16" height="15" viewBox="0 0 16 15"><rect x="5.500" y="6.500" width="9" height="6.500" fill="none" stroke="#c8c8c8" stroke-width="1.100"/><path d="M6.500 6.500V4Q6.500 1.500 4 1.500T1.500 4V5.500" fill="none" stroke="#c8c8c8" stroke-width="1.100"/><path d="M10 9V10.500" stroke="#c8c8c8" stroke-width="1.200"/></svg>
<div class="a" style="left:1892px;top:554px;width:4px;height:4px;border-radius:2px;background:#e0e0e0"></div>
<div class="a num" style="left:1738px;top:573px;width:125px;height:18px;border-radius:4px 4px 0 0"></div>
<div class="t ts" style="left:1738px;top:575px;width:125px;text-align:center;color:#f0f0f0">0°</div>
<div class="t ts" style="left:1628px;top:575px;width:100px;text-align:right;color:#e0e0e0">Rotation X</div>
<svg style="left:1867px;top:574px" width="16" height="15" viewBox="0 0 16 15"><rect x="5.500" y="6.500" width="9" height="6.500" fill="none" stroke="#c8c8c8" stroke-width="1.100"/><path d="M6.500 6.500V4Q6.500 1.500 4 1.500T1.500 4V5.500" fill="none" stroke="#c8c8c8" stroke-width="1.100"/><path d="M10 9V10.500" stroke="#c8c8c8" stroke-width="1.200"/></svg>
<div class="a" style="left:1892px;top:580px;width:4px;height:4px;border-radius:2px;background:#e0e0e0"></div>
<div class="a num" style="left:1738px;top:592.5px;width:125px;height:18px;border-radius:0"></div>
<div class="t ts" style="left:1738px;top:594.5px;width:125px;text-align:center;color:#f0f0f0">0°</div>
<div class="t ts" style="left:1628px;top:594.5px;width:100px;text-align:right;color:#e0e0e0">Y</div>
<svg style="left:1867px;top:593.5px" width="16" height="15" viewBox="0 0 16 15"><rect x="5.500" y="6.500" width="9" height="6.500" fill="none" stroke="#c8c8c8" stroke-width="1.100"/><path d="M6.500 6.500V4Q6.500 1.500 4 1.500T1.500 4V5.500" fill="none" stroke="#c8c8c8" stroke-width="1.100"/><path d="M10 9V10.500" stroke="#c8c8c8" stroke-width="1.200"/></svg>
<div class="a" style="left:1892px;top:599.5px;width:4px;height:4px;border-radius:2px;background:#e0e0e0"></div>
<div class="a num" style="left:1738px;top:612px;width:125px;height:18px;border-radius:0 0 4px 4px"></div>
<div class="t ts" style="left:1738px;top:614px;width:125px;text-align:center;color:#f0f0f0">0°</div>
<div class="t ts" style="left:1628px;top:614px;width:100px;text-align:right;color:#e0e0e0">Z</div>
<svg style="left:1867px;top:613px" width="16" height="15" viewBox="0 0 16 15"><rect x="5.500" y="6.500" width="9" height="6.500" fill="none" stroke="#c8c8c8" stroke-width="1.100"/><path d="M6.500 6.500V4Q6.500 1.500 4 1.500T1.500 4V5.500" fill="none" stroke="#c8c8c8" stroke-width="1.100"/><path d="M10 9V10.500" stroke="#c8c8c8" stroke-width="1.200"/></svg>
<div class="a" style="left:1892px;top:619px;width:4px;height:4px;border-radius:2px;background:#e0e0e0"></div>
<div class="t ts" style="left:1628px;top:640px;width:100px;text-align:right;color:#e0e0e0">Mode</div>
<div class="f" style="left:1738px;top:638px;width:125px;height:18px;background:#282828;border:1px solid #3d3d3d"></div>
<div class="t" style="left:1745px;top:640px;color:#e6e6e6">XYZ Euler</div>
<svg style="left:1852px;top:645px" width="8" height="6" viewBox="0 0 8 6"><path class="chev" d="M1 1 4 4 7 1"/></svg>
<div class="a" style="left:1892px;top:645px;width:4px;height:4px;border-radius:2px;background:#e0e0e0"></div>
<div class="a num" style="left:1738px;top:663px;width:125px;height:18px;border-radius:4px 4px 0 0"></div>
<div class="t ts" style="left:1738px;top:665px;width:125px;text-align:center;color:#f0f0f0">6.830</div>
<div class="t ts" style="left:1628px;top:665px;width:100px;text-align:right;color:#e0e0e0">Scale X</div>
<svg style="left:1867px;top:664px" width="16" height="15" viewBox="0 0 16 15"><rect x="5.500" y="6.500" width="9" height="6.500" fill="none" stroke="#c8c8c8" stroke-width="1.100"/><path d="M6.500 6.500V4Q6.500 1.500 4 1.500T1.500 4V5.500" fill="none" stroke="#c8c8c8" stroke-width="1.100"/><path d="M10 9V10.500" stroke="#c8c8c8" stroke-width="1.200"/></svg>
<div class="a" style="left:1892px;top:670px;width:4px;height:4px;border-radius:2px;background:#e0e0e0"></div>
<div class="a num" style="left:1738px;top:682.5px;width:125px;height:18px;border-radius:0"></div>
<div class="t ts" style="left:1738px;top:684.5px;width:125px;text-align:center;color:#f0f0f0">3.015</div>
<div class="t ts" style="left:1628px;top:684.5px;width:100px;text-align:right;color:#e0e0e0">Y</div>
<svg style="left:1867px;top:683.5px" width="16" height="15" viewBox="0 0 16 15"><rect x="5.500" y="6.500" width="9" height="6.500" fill="none" stroke="#c8c8c8" stroke-width="1.100"/><path d="M6.500 6.500V4Q6.500 1.500 4 1.500T1.500 4V5.500" fill="none" stroke="#c8c8c8" stroke-width="1.100"/><path d="M10 9V10.500" stroke="#c8c8c8" stroke-width="1.200"/></svg>
<div class="a" style="left:1892px;top:689.5px;width:4px;height:4px;border-radius:2px;background:#e0e0e0"></div>
<div class="a num" style="left:1738px;top:702px;width:125px;height:18px;border-radius:0 0 4px 4px"></div>
<div class="t ts" style="left:1738px;top:704px;width:125px;text-align:center;color:#f0f0f0">1.000</div>
<div class="t ts" style="left:1628px;top:704px;width:100px;text-align:right;color:#e0e0e0">Z</div>
<svg style="left:1867px;top:703px" width="16" height="15" viewBox="0 0 16 15"><rect x="5.500" y="6.500" width="9" height="6.500" fill="none" stroke="#c8c8c8" stroke-width="1.100"/><path d="M6.500 6.500V4Q6.500 1.500 4 1.500T1.500 4V5.500" fill="none" stroke="#c8c8c8" stroke-width="1.100"/><path d="M10 9V10.500" stroke="#c8c8c8" stroke-width="1.200"/></svg>
<div class="a" style="left:1892px;top:709px;width:4px;height:4px;border-radius:2px;background:#e0e0e0"></div>
<svg style="left:1648px;top:738px" width="7" height="10" viewBox="0 0 7 10"><path d="M1 1 5.500 5 1 9" stroke="#a8a8a8" stroke-width="1.200" fill="none"/></svg>
<div class="t ts" style="left:1660px;top:736px;color:#e6e6e6">Delta Transform</div>
<div class="a" style="left:1624px;top:757px;width:288px;height:25px;background:#3b3b3b;border-radius:4px"></div>
<svg style="left:1634px;top:765px" width="7" height="10" viewBox="0 0 7 10"><path d="M1 1 5.500 5 1 9" stroke="#a8a8a8" stroke-width="1.200" fill="none"/></svg>
<div class="t ts" style="left:1646px;top:763px;color:#e6e6e6">Relations</div>
<svg style="left:1895px;top:767px" width="10" height="6" viewBox="0 0 10 6"><g fill="#1c1c1c"><rect x="0.5" y="0.5" width="1.400" height="1.400"/><rect x="3" y="0.5" width="1.400" height="1.400"/><rect x="5.5" y="0.5" width="1.400" height="1.400"/><rect x="8" y="0.5" width="1.400" height="1.400"/><rect x="0.5" y="3.5" width="1.400" height="1.400"/><rect x="3" y="3.5" width="1.400" height="1.400"/><rect x="5.5" y="3.5" width="1.400" height="1.400"/><rect x="8" y="3.5" width="1.400" height="1.400"/></g></svg>
<div class="a" style="left:1624px;top:784px;width:288px;height:25px;background:#3b3b3b;border-radius:4px"></div>
<svg style="left:1634px;top:792px" width="7" height="10" viewBox="0 0 7 10"><path d="M1 1 5.500 5 1 9" stroke="#a8a8a8" stroke-width="1.200" fill="none"/></svg>
<div class="t ts" style="left:1646px;top:790px;color:#e6e6e6">Collections</div>
<svg style="left:1895px;top:794px" width="10" height="6" viewBox="0 0 10 6"><g fill="#1c1c1c"><rect x="0.5" y="0.5" width="1.400" height="1.400"/><rect x="3" y="0.5" width="1.400" height="1.400"/><rect x="5.5" y="0.5" width="1.400" height="1.400"/><rect x="8" y="0.5" width="1.400" height="1.400"/><rect x="0.5" y="3.5" width="1.400" height="1.400"/><rect x="3" y="3.5" width="1.400" height="1.400"/><rect x="5.5" y="3.5" width="1.400" height="1.400"/><rect x="8" y="3.5" width="1.400" height="1.400"/></g></svg>
<div class="a" style="left:1624px;top:811px;width:288px;height:25px;background:#3b3b3b;border-radius:4px"></div>
<svg style="left:1634px;top:819px" width="7" height="10" viewBox="0 0 7 10"><path d="M1 1 5.500 5 1 9" stroke="#a8a8a8" stroke-width="1.200" fill="none"/></svg>
<div class="t ts" style="left:1646px;top:817px;color:#e6e6e6">Instancing</div>
<svg style="left:1895px;top:821px" width="10" height="6" viewBox="0 0 10 6"><g fill="#1c1c1c"><rect x="0.5" y="0.5" width="1.400" height="1.400"/><rect x="3" y="0.5" width="1.400" height="1.400"/><rect x="5.5" y="0.5" width="1.400" height="1.400"/><rect x="8" y="0.5" width="1.400" height="1.400"/><rect x="0.5" y="3.5" width="1.400" height="1.400"/><rect x="3" y="3.5" width="1.400" height="1.400"/><rect x="5.5" y="3.5" width="1.400" height="1.400"/><rect x="8" y="3.5" width="1.400" height="1.400"/></g></svg>
<div class="a" style="left:1624px;top:838px;width:288px;height:25px;background:#3b3b3b;border-radius:4px"></div>
<svg style="left:1634px;top:846px" width="7" height="10" viewBox="0 0 7 10"><path d="M1 1 5.500 5 1 9" stroke="#a8a8a8" stroke-width="1.200" fill="none"/></svg>
<div class="t ts" style="left:1646px;top:844px;color:#e6e6e6">Motion Paths</div>
<svg style="left:1895px;top:848px" width="10" height="6" viewBox="0 0 10 6"><g fill="#1c1c1c"><rect x="0.5" y="0.5" width="1.400" height="1.400"/><rect x="3" y="0.5" width="1.400" height="1.400"/><rect x="5.5" y="0.5" width="1.400" height="1.400"/><rect x="8" y="0.5" width="1.400" height="1.400"/><rect x="0.5" y="3.5" width="1.400" height="1.400"/><rect x="3" y="3.5" width="1.400" height="1.400"/><rect x="5.5" y="3.5" width="1.400" height="1.400"/><rect x="8" y="3.5" width="1.400" height="1.400"/></g></svg>
<div class="a" style="left:1624px;top:865px;width:288px;height:25px;background:#3b3b3b;border-radius:4px"></div>
<svg style="left:1634px;top:873px" width="7" height="10" viewBox="0 0 7 10"><path d="M1 1 5.500 5 1 9" stroke="#a8a8a8" stroke-width="1.200" fill="none"/></svg>
<div class="t ts" style="left:1646px;top:871px;color:#e6e6e6">Visibility</div>
<svg style="left:1895px;top:875px" width="10" height="6" viewBox="0 0 10 6"><g fill="#1c1c1c"><rect x="0.5" y="0.5" width="1.400" height="1.400"/><rect x="3" y="0.5" width="1.400" height="1.400"/><rect x="5.5" y="0.5" width="1.400" height="1.400"/><rect x="8" y="0.5" width="1.400" height="1.400"/><rect x="0.5" y="3.5" width="1.400" height="1.400"/><rect x="3" y="3.5" width="1.400" height="1.400"/><rect x="5.5" y="3.5" width="1.400" height="1.400"/><rect x="8" y="3.5" width="1.400" height="1.400"/></g></svg>
<div class="a" style="left:1624px;top:892px;width:288px;height:25px;background:#3b3b3b;border-radius:4px"></div>
<svg style="left:1634px;top:900px" width="7" height="10" viewBox="0 0 7 10"><path d="M1 1 5.500 5 1 9" stroke="#a8a8a8" stroke-width="1.200" fill="none"/></svg>
<div class="t ts" style="left:1646px;top:898px;color:#e6e6e6">Viewport Display</div>
<svg style="left:1895px;top:902px" width="10" height="6" viewBox="0 0 10 6"><g fill="#1c1c1c"><rect x="0.5" y="0.5" width="1.400" height="1.400"/><rect x="3" y="0.5" width="1.400" height="1.400"/><rect x="5.5" y="0.5" width="1.400" height="1.400"/><rect x="8" y="0.5" width="1.400" height="1.400"/><rect x="0.5" y="3.5" width="1.400" height="1.400"/><rect x="3" y="3.5" width="1.400" height="1.400"/><rect x="5.5" y="3.5" width="1.400" height="1.400"/><rect x="8" y="3.5" width="1.400" height="1.400"/></g></svg>
<div class="a" style="left:1624px;top:919px;width:288px;height:25px;background:#3b3b3b;border-radius:4px"></div>
<svg style="left:1634px;top:927px" width="7" height="10" viewBox="0 0 7 10"><path d="M1 1 5.500 5 1 9" stroke="#a8a8a8" stroke-width="1.200" fill="none"/></svg>
<div class="t ts" style="left:1646px;top:925px;color:#e6e6e6">Line Art</div>
<svg style="left:1895px;top:929px" width="10" height="6" viewBox="0 0 10 6"><g fill="#1c1c1c"><rect x="0.5" y="0.5" width="1.400" height="1.400"/><rect x="3" y="0.5" width="1.400" height="1.400"/><rect x="5.5" y="0.5" width="1.400" height="1.400"/><rect x="8" y="0.5" width="1.400" height="1.400"/><rect x="0.5" y="3.5" width="1.400" height="1.400"/><rect x="3" y="3.5" width="1.400" height="1.400"/><rect x="5.5" y="3.5" width="1.400" height="1.400"/><rect x="8" y="3.5" width="1.400" height="1.400"/></g></svg>
<div class="a" style="left:1624px;top:946px;width:288px;height:25px;background:#3b3b3b;border-radius:4px"></div>
<svg style="left:1634px;top:954px" width="7" height="10" viewBox="0 0 7 10"><path d="M1 1 5.500 5 1 9" stroke="#a8a8a8" stroke-width="1.200" fill="none"/></svg>
<div class="t ts" style="left:1646px;top:952px;color:#e6e6e6">Custom Properties</div>
<svg style="left:1895px;top:956px" width="10" height="6" viewBox="0 0 10 6"><g fill="#1c1c1c"><rect x="0.5" y="0.5" width="1.400" height="1.400"/><rect x="3" y="0.5" width="1.400" height="1.400"/><rect x="5.5" y="0.5" width="1.400" height="1.400"/><rect x="8" y="0.5" width="1.400" height="1.400"/><rect x="0.5" y="3.5" width="1.400" height="1.400"/><rect x="3" y="3.5" width="1.400" height="1.400"/><rect x="5.5" y="3.5" width="1.400" height="1.400"/><rect x="8" y="3.5" width="1.400" height="1.400"/></g></svg>
<svg style="left:1700px;top:985px" width="200" height="66" viewBox="1700 985 200 66"><g opacity="0.35" transform="translate(1.500 2)" fill="#000"><path d="M1709.500 991.700H1727.300V997.500H1716.500V1024.500H1722.500V1030.700L1727.300 1030.700 1727.300 1043.500 1719 1030.700H1709.500Z"/><path d="M1735 991.700H1752.300V1030.700H1735V1024.500H1745.500V997.500H1735Z"/></g><path d="M1709.500 991.700H1727.300V997.500H1716.500V1024.500H1722.500V1030.700L1727.300 1030.700 1727.300 1043.500 1719 1030.700H1709.500Z" fill="#8e3049"/><path d="M1735 991.700H1752.300V1030.700H1735V1024.500H1745.500V997.500H1735Z" fill="#2f7ca6"/><g fill="#8c8c8c"><path d="M1761.700 991.700H1770.500L1781.700 1006 1793 991.700H1801.700L1786 1011 1801.700 1030.300H1793L1781.700 1016 1770.500 1030.300H1761.700L1777.500 1011Z"/><path d="M1806 991.700H1836Q1841 991.700 1841 996.700V1025.300Q1841 1030.300 1836 1030.300H1806ZM1812.500 997.700V1024.300H1834.500V997.700Z" fill-rule="evenodd"/><path d="M1846.700 1030.300V996.700Q1846.700 991.700 1851.700 991.700H1881Q1886 991.700 1886 996.700V1030.300H1879.500V1016.500H1853.200V1030.300ZM1853.200 997.700V1010.500H1879.500V997.700Z" fill-rule="evenodd"/></g></svg>
</div></body></html>
